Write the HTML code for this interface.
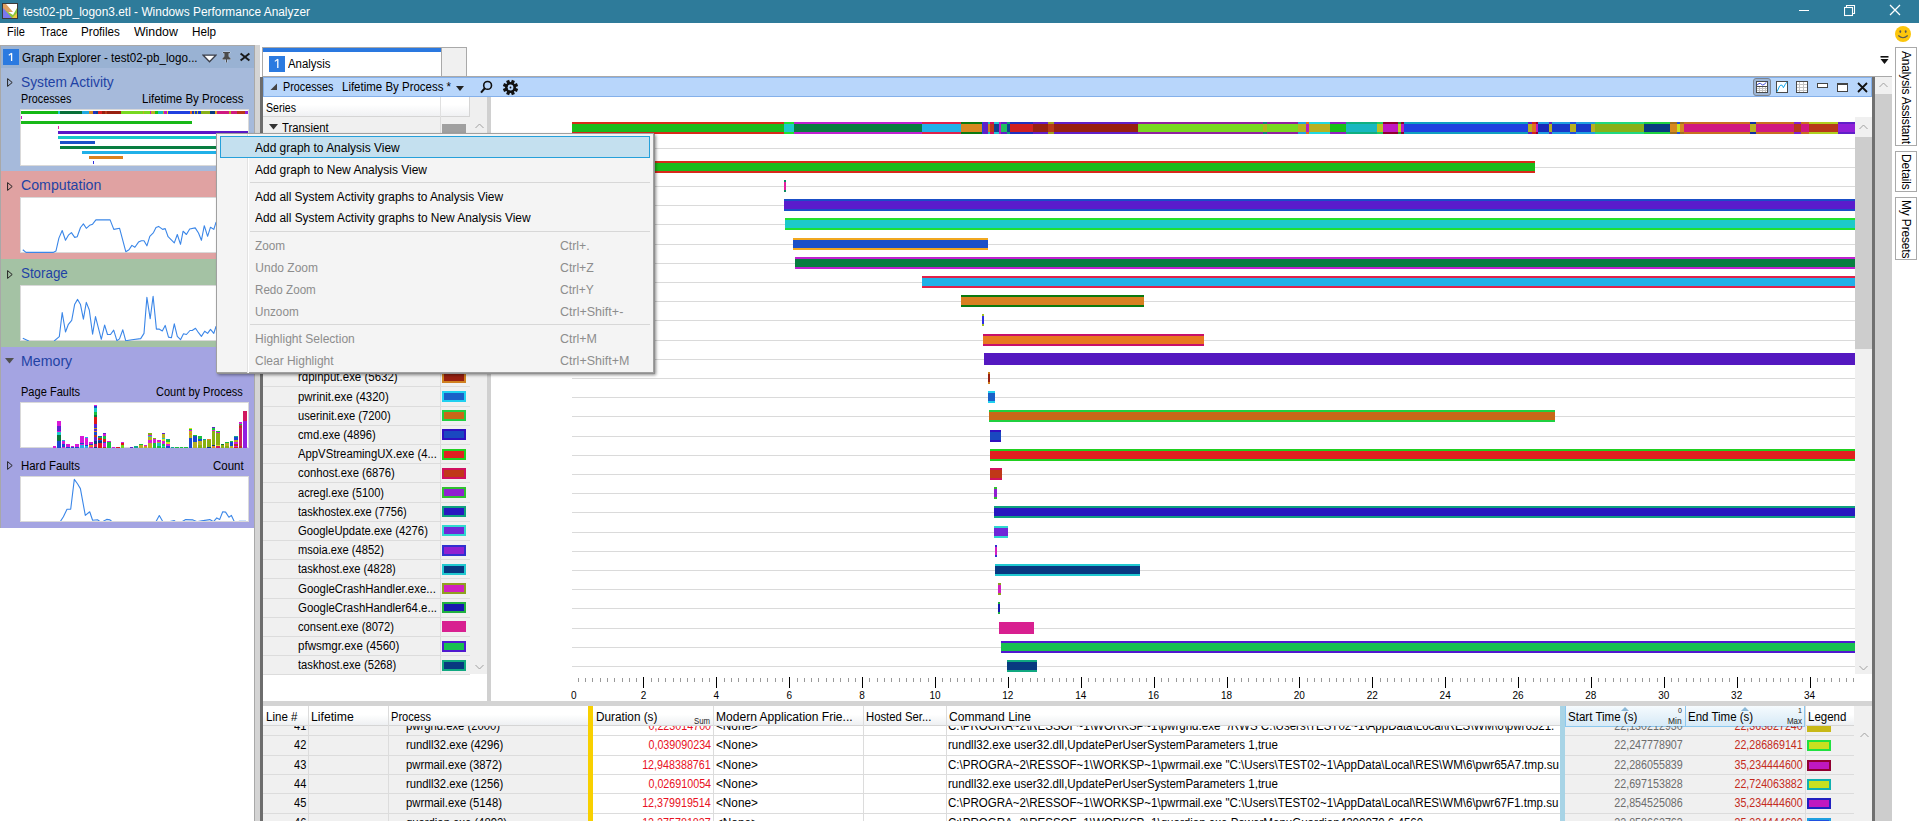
<!DOCTYPE html><html><head><meta charset="utf-8"><style>
html,body{margin:0;padding:0;width:1919px;height:821px;overflow:hidden;background:#fff;font-family:"Liberation Sans", sans-serif;font-size:12px;}
body>div,#root div{box-sizing:border-box;}
#root{position:relative;width:1919px;height:821px;overflow:hidden;}
</style></head><body><div id="root">
<div style="position:absolute;left:0px;top:0px;width:1919px;height:23px;background:#2e7b9a;"></div>
<svg style="position:absolute;left:2px;top:3px" width="16" height="16" viewBox="0 0 16 16"><rect x="0.5" y="0.5" width="15" height="15" fill="#fff" stroke="#3a3a3a" stroke-width="1"/><polygon points="1,1 4,1 11,9 1,9" fill="#e0a060"/><polygon points="1,5 11,15 1,15" fill="#7a78ee"/><polygon points="3,7 11,12 15,5 15,12 12,15 10,15" fill="#8cc43c"/><polygon points="15,10 15,15 10,15" fill="#f0c840"/></svg>
<div style="position:absolute;left:23.3px;top:2.00px;font-size:12px;line-height:20px;color:#fff;white-space:nowrap;transform-origin:left center;transform:scaleX(0.9914);">test02-pb_logon3.etl - Windows Performance Analyzer</div>
<div style="position:absolute;left:1799px;top:10px;width:10px;height:1px;background:#fff;"></div>
<svg style="position:absolute;left:1844px;top:5px" width="12" height="12" viewBox="0 0 12 12"><rect x="0.5" y="2.5" width="8" height="8" fill="none" stroke="#fff" stroke-width="1.1"/><path d="M2.5 2.5 V0.5 H10.5 V8.5 H8.5" fill="none" stroke="#fff" stroke-width="1.1"/></svg>
<svg style="position:absolute;left:1889px;top:4px" width="12" height="12" viewBox="0 0 12 12"><path d="M1 1 L11 11 M11 1 L1 11" stroke="#fff" stroke-width="1.3"/></svg>
<div style="position:absolute;left:7.3px;top:22.00px;font-size:12px;line-height:20px;color:#000;white-space:nowrap;transform-origin:left center;transform:scaleX(0.9202);">File</div>
<div style="position:absolute;left:39.5px;top:22.00px;font-size:12px;line-height:20px;color:#000;white-space:nowrap;transform-origin:left center;transform:scaleX(0.9096);">Trace</div>
<div style="position:absolute;left:81.1px;top:22.00px;font-size:12px;line-height:20px;color:#000;white-space:nowrap;transform-origin:left center;transform:scaleX(0.9696);">Profiles</div>
<div style="position:absolute;left:134.2px;top:22.00px;font-size:12px;line-height:20px;color:#000;white-space:nowrap;transform-origin:left center;transform:scaleX(1.0261);">Window</div>
<div style="position:absolute;left:192.3px;top:22.00px;font-size:12px;line-height:20px;color:#000;white-space:nowrap;transform-origin:left center;transform:scaleX(0.9762);">Help</div>
<svg style="position:absolute;left:1895px;top:26px" width="16" height="16" viewBox="0 0 16 16"><circle cx="8" cy="8" r="8" fill="#fcc60c"/><ellipse cx="5.3" cy="5.6" rx="0.9" ry="1.3" fill="#555"/><ellipse cx="10.7" cy="5.6" rx="0.9" ry="1.3" fill="#555"/><path d="M3.3 9.5 Q8 14 12.7 9.5" fill="none" stroke="#555" stroke-width="1.1"/></svg>
<div style="position:absolute;left:0px;top:45px;width:259px;height:776px;background:#fff;"></div>
<div style="position:absolute;left:0px;top:45px;width:254px;height:1px;background:#a9a9a9;"></div>
<div style="position:absolute;left:0px;top:45px;width:1px;height:483px;background:#a8a8a8;"></div>
<div style="position:absolute;left:254px;top:45px;width:1px;height:776px;background:#a9a9a9;"></div>
<div style="position:absolute;left:255px;top:45px;width:5px;height:776px;background:#d4d4d4;"></div>
<div style="position:absolute;left:1px;top:46px;width:253px;height:22px;background:#99b2d3;"></div>
<div style="position:absolute;left:1px;top:68px;width:253px;height:103px;background:#a6badb;"></div>
<div style="position:absolute;left:1px;top:171px;width:253px;height:88px;background:#e0a2a2;"></div>
<div style="position:absolute;left:1px;top:259px;width:253px;height:88px;background:#a4c2a4;"></div>
<div style="position:absolute;left:1px;top:347px;width:253px;height:181px;background:#a4a4e2;"></div>
<div style="position:absolute;left:3px;top:49px;width:16px;height:16px;background:#2b7ae0;"></div>
<svg style="position:absolute;left:7px;top:52px" width="8" height="10" viewBox="0 0 8 10"><path d="M4.6 1.2 V9" stroke="#fff" stroke-width="1.3"/><path d="M4.6 1.2 L1.8 3.2" stroke="#fff" stroke-width="1.1"/></svg>
<div style="position:absolute;left:22.2px;top:48.00px;font-size:12px;line-height:20px;color:#000;white-space:nowrap;transform-origin:left center;transform:scaleX(0.9678);">Graph Explorer - test02-pb_logo...</div>
<svg style="position:absolute;left:202px;top:54px" width="15" height="9" viewBox="0 0 15 9"><path d="M1.2 1.2 H13.8 L7.5 7.8 Z" fill="#fff" stroke="#3c3f4a" stroke-width="1.3" stroke-linejoin="miter"/></svg>
<svg style="position:absolute;left:221px;top:51px" width="11" height="12" viewBox="0 0 11 12"><path d="M2 1 H9 V2.2 H7.6 V5.6 L9.6 7.6 V8.4 H6 V11.4 H5 V8.4 H1.4 V7.6 L3.4 5.6 V2.2 H2 Z" fill="#4b4b4b" stroke="#eef4fb" stroke-width="0.6" paint-order="stroke"/></svg>
<svg style="position:absolute;left:239px;top:52px" width="12" height="10" viewBox="0 0 12 10"><path d="M1.6 1.4 L10.4 8.6 M10.4 1.4 L1.6 8.6" stroke="#1a1a1a" stroke-width="1.9"/></svg>
<svg style="position:absolute;left:7px;top:78px" width="6" height="9" viewBox="0 0 6 9"><path d="M0.6 0.6 L5.2 4.5 L0.6 8.4 Z" fill="none" stroke="#222" stroke-width="1"/></svg>
<div style="position:absolute;left:21.4px;top:72.00px;font-size:14px;line-height:20px;color:#1f42a4;white-space:nowrap;transform-origin:left center;transform:scaleX(0.9847);">System Activity</div>
<div style="position:absolute;left:21.4px;top:89.00px;font-size:12px;line-height:20px;color:#000;white-space:nowrap;transform-origin:left center;transform:scaleX(0.8977);">Processes</div>
<div style="position:absolute;left:142.4px;top:89.00px;font-size:12px;line-height:20px;color:#000;white-space:nowrap;transform-origin:left center;transform:scaleX(0.9581);">Lifetime By Process</div>
<div style="position:absolute;left:20px;top:109px;width:229px;height:57px;background:#fff;border:1px solid #d9d9d9;"></div>
<div style="position:absolute;left:21px;top:111px;width:37px;height:3px;background:#14b814;"></div>
<div style="position:absolute;left:58px;top:111px;width:2px;height:3px;background:#20c8c8;"></div>
<div style="position:absolute;left:60px;top:111px;width:22px;height:3px;background:#087038;"></div>
<div style="position:absolute;left:82px;top:111px;width:7px;height:3px;background:#20a8e0;"></div>
<div style="position:absolute;left:89px;top:111px;width:4px;height:3px;background:#d88820;"></div>
<div style="position:absolute;left:93px;top:111px;width:3px;height:3px;background:#2030c0;"></div>
<div style="position:absolute;left:96px;top:111px;width:2px;height:3px;background:#104090;"></div>
<div style="position:absolute;left:98px;top:111px;width:4px;height:3px;background:#e02020;"></div>
<div style="position:absolute;left:102px;top:111px;width:3px;height:3px;background:#982010;"></div>
<div style="position:absolute;left:105px;top:111px;width:2px;height:3px;background:#b83818;"></div>
<div style="position:absolute;left:107px;top:111px;width:14px;height:3px;background:#982010;"></div>
<div style="position:absolute;left:121px;top:111px;width:22px;height:3px;background:#78d820;"></div>
<div style="position:absolute;left:143px;top:111px;width:1px;height:3px;background:#b8b020;"></div>
<div style="position:absolute;left:144px;top:111px;width:5.599999999999994px;height:3px;background:#78d820;"></div>
<div style="position:absolute;left:149.6px;top:111px;width:1.0999999999999943px;height:3px;background:#c018c0;"></div>
<div style="position:absolute;left:150.7px;top:111px;width:4.300000000000011px;height:3px;background:#b8b020;"></div>
<div style="position:absolute;left:155px;top:111px;width:3px;height:3px;background:#18c018;"></div>
<div style="position:absolute;left:158px;top:111px;width:5px;height:3px;background:#18b8c0;"></div>
<div style="position:absolute;left:163px;top:111px;width:1px;height:3px;background:#b8b020;"></div>
<div style="position:absolute;left:164px;top:111px;width:3px;height:3px;background:#c018c0;"></div>
<div style="position:absolute;left:167px;top:111px;width:1px;height:3px;background:#e0e020;"></div>
<div style="position:absolute;left:168px;top:111px;width:22px;height:3px;background:#2040e0;"></div>
<div style="position:absolute;left:190px;top:111px;width:2px;height:3px;background:#e07020;"></div>
<div style="position:absolute;left:192px;top:111px;width:2px;height:3px;background:#1838c8;"></div>
<div style="position:absolute;left:194px;top:111px;width:1px;height:3px;background:#b8b020;"></div>
<div style="position:absolute;left:195px;top:111px;width:2px;height:3px;background:#1838c8;"></div>
<div style="position:absolute;left:197px;top:111px;width:1px;height:3px;background:#b8b020;"></div>
<div style="position:absolute;left:198px;top:111px;width:3px;height:3px;background:#1838c8;"></div>
<div style="position:absolute;left:201px;top:111px;width:8.800000000000011px;height:3px;background:#88b018;"></div>
<div style="position:absolute;left:209.8px;top:111px;width:5.5px;height:3px;background:#083a80;"></div>
<div style="position:absolute;left:215.3px;top:111px;width:1.6999999999999886px;height:3px;background:#e0a020;"></div>
<div style="position:absolute;left:217px;top:111px;width:12px;height:3px;background:#d01880;"></div>
<div style="position:absolute;left:229px;top:111px;width:2px;height:3px;background:#b8b020;"></div>
<div style="position:absolute;left:231px;top:111px;width:6.199999999999989px;height:3px;background:#d01880;"></div>
<div style="position:absolute;left:237.2px;top:111px;width:8.0px;height:3px;background:#b83818;"></div>
<div style="position:absolute;left:245.2px;top:111px;width:2.8000000000000114px;height:3px;background:#9020d8;"></div>
<div style="position:absolute;left:21px;top:116px;width:1px;height:3px;background:#c018c0;"></div>
<div style="position:absolute;left:21px;top:121px;width:171px;height:3px;background:#18b818;"></div>
<div style="position:absolute;left:58px;top:126px;width:1px;height:3px;background:#e020a0;"></div>
<div style="position:absolute;left:58px;top:131px;width:190px;height:3px;background:#5a18c8;"></div>
<div style="position:absolute;left:58px;top:136px;width:158px;height:3px;background:#18c8c8;"></div>
<div style="position:absolute;left:60px;top:141px;width:35px;height:3px;background:#1a50c8;"></div>
<div style="position:absolute;left:60px;top:146px;width:156px;height:3px;background:#087d40;"></div>
<div style="position:absolute;left:82px;top:151px;width:134px;height:3px;background:#20b0e8;"></div>
<div style="position:absolute;left:89px;top:156px;width:34px;height:3px;background:#d88020;"></div>
<div style="position:absolute;left:93px;top:161px;width:1px;height:3px;background:#3030e0;"></div>
<svg style="position:absolute;left:7px;top:182px" width="6" height="9" viewBox="0 0 6 9"><path d="M0.6 0.6 L5.2 4.5 L0.6 8.4 Z" fill="none" stroke="#222" stroke-width="1"/></svg>
<div style="position:absolute;left:21.4px;top:175.00px;font-size:14px;line-height:20px;color:#1f42a4;white-space:nowrap;transform-origin:left center;transform:scaleX(1.0115);">Computation</div>
<div style="position:absolute;left:20px;top:197px;width:229px;height:56px;background:#fff;border:1px solid #d9d9d9;"></div>
<div style="position:absolute;left:0;top:0;width:259px;height:252.5px;overflow:hidden"><svg style="position:absolute;left:0;top:0" width="259" height="540" viewBox="0 0 259 540"><polyline points="22.8,249.8 26.0,252.4 53.1,252.4 56.0,250.9 58.9,238.1 62.2,230.5 65.5,240.3 68.4,235.2 71.4,232.6 74.7,237.4 77.2,236.7 80.5,227.5 83.4,223.9 86.3,228.3 89.6,225.3 92.6,224.2 95.9,219.9 110.1,219.9 113.8,229.4 119.6,228.3 125.8,251.7 129.0,249.8 131.9,245.4 134.9,247.3 138.5,242.1 141.4,240.7 144.0,240.7 146.9,245.8 149.8,236.3 153.5,232.6 156.0,227.5 158.6,226.4 162.6,229.4 165.2,228.6 168.1,236.7 174.3,242.9 177.3,234.5 180.5,244.3 183.1,231.2 186.4,234.5 189.7,229.0 195.2,227.9 198.5,233.0 201.4,240.3 204.3,225.7 207.6,236.3 210.5,227.2 213.8,229.4 216.0,222.4 222.0,230.0 230.0,226.0 238.0,234.0 246.0,224.0" fill="none" stroke="#3a86e8" stroke-width="1.1" stroke-linejoin="round"/></svg></div>
<svg style="position:absolute;left:7px;top:270px" width="6" height="9" viewBox="0 0 6 9"><path d="M0.6 0.6 L5.2 4.5 L0.6 8.4 Z" fill="none" stroke="#222" stroke-width="1"/></svg>
<div style="position:absolute;left:21.4px;top:263.00px;font-size:14px;line-height:20px;color:#1f42a4;white-space:nowrap;transform-origin:left center;transform:scaleX(0.9542);">Storage</div>
<div style="position:absolute;left:20px;top:285px;width:229px;height:56px;background:#fff;border:1px solid #d9d9d9;"></div>
<div style="position:absolute;left:0;top:0;width:259px;height:340.5px;overflow:hidden"><svg style="position:absolute;left:0;top:0" width="259" height="540" viewBox="0 0 259 540"><polyline points="22.8,338.2 28.2,340.7 29.0,341.5 54.0,341.5 54.5,340.7 59.3,336.7 62.2,312.6 65.5,332.0 68.4,324.3 71.7,320.3 74.7,304.2 77.6,299.4 80.5,304.6 83.4,319.2 86.3,302.4 89.3,310.0 92.6,334.2 95.5,316.6 101.3,339.3 104.6,325.0 107.5,334.5 110.5,334.5 113.7,330.1 116.9,340.7 119.5,338.9 122.8,329.8 125.7,340.7 131.9,339.7 140.7,338.6 144.0,333.4 146.9,297.3 150.2,318.8 153.1,296.2 156.4,329.1 159.0,329.1 162.3,330.9 165.2,325.4 168.5,337.1 171.4,337.8 174.3,323.9 177.3,336.4 180.5,339.7 183.5,333.8 186.4,334.5 190.0,330.5 192.2,330.5 195.5,328.3 198.5,332.7 201.4,336.4 204.7,331.2 207.6,333.4 210.5,329.4 213.8,333.4 216.0,326.5 224.0,334.0 232.0,328.0 240.0,336.0 247.0,330.0" fill="none" stroke="#3a86e8" stroke-width="1.1" stroke-linejoin="round"/></svg></div>
<svg style="position:absolute;left:5px;top:358px" width="9" height="6" viewBox="0 0 9 6"><path d="M0 0 H9 L4.5 5.5 Z" fill="#505050"/></svg>
<div style="position:absolute;left:21.4px;top:351.00px;font-size:14px;line-height:20px;color:#1f42a4;white-space:nowrap;transform-origin:left center;transform:scaleX(1.0126);">Memory</div>
<div style="position:absolute;left:21.4px;top:382.00px;font-size:12px;line-height:20px;color:#000;white-space:nowrap;transform-origin:left center;transform:scaleX(0.9212);">Page Faults</div>
<div style="position:absolute;left:156.4px;top:382.00px;font-size:12px;line-height:20px;color:#000;white-space:nowrap;transform-origin:left center;transform:scaleX(0.9164);">Count by Process</div>
<div style="position:absolute;left:20px;top:402px;width:229px;height:46px;background:#fff;border:1px solid #d9d9d9;"></div>
<svg style="position:absolute;left:0;top:0" width="259" height="540" shape-rendering="crispEdges"><rect x="53" y="446" width="3" height="2" fill="#d818d8"/><rect x="57" y="421" width="4" height="5" fill="#d818d8"/><rect x="57" y="426" width="4" height="5" fill="#6020d0"/><rect x="57" y="431" width="4" height="1" fill="#d818d8"/><rect x="57" y="432" width="4" height="3" fill="#18c8c8"/><rect x="57" y="435" width="4" height="6" fill="#087838"/><rect x="57" y="441" width="4" height="7" fill="#1848d0"/><rect x="62" y="439.5" width="3" height="1.5" fill="#20b0e8"/><rect x="62" y="441" width="3" height="3" fill="#d818d8"/><rect x="62" y="444" width="3" height="3" fill="#1848d0"/><rect x="62" y="447" width="3" height="1" fill="#d818d8"/><rect x="66" y="444" width="4" height="3" fill="#d818d8"/><rect x="66" y="447" width="4" height="1" fill="#1848d0"/><rect x="71" y="446" width="3" height="1" fill="#d818d8"/><rect x="71" y="447" width="3" height="1" fill="#1848d0"/><rect x="75" y="444" width="4" height="3" fill="#d818d8"/><rect x="75" y="447" width="4" height="1" fill="#1848d0"/><rect x="80" y="436" width="4" height="7" fill="#d818d8"/><rect x="80" y="443" width="4" height="1" fill="#1848d0"/><rect x="80" y="444" width="4" height="1" fill="#d818d8"/><rect x="80" y="445" width="4" height="3" fill="#20b0e8"/><rect x="85" y="437" width="3" height="1" fill="#20b0e8"/><rect x="85" y="438" width="3" height="6.5" fill="#d818d8"/><rect x="85" y="444.5" width="3" height="1.0" fill="#1848d0"/><rect x="85" y="445.5" width="3" height="2.5" fill="#20b0e8"/><rect x="89" y="442" width="4" height="2" fill="#d818d8"/><rect x="89" y="444" width="4" height="1" fill="#1848d0"/><rect x="89" y="445" width="4" height="2" fill="#e08818"/><rect x="89" y="447" width="4" height="1" fill="#d818d8"/><rect x="94" y="405" width="3" height="1" fill="#d818d8"/><rect x="94" y="406" width="3" height="2" fill="#1848d0"/><rect x="94" y="408" width="3" height="4" fill="#18c8c8"/><rect x="94" y="412" width="3" height="3" fill="#18c040"/><rect x="94" y="415" width="3" height="2" fill="#087838"/><rect x="94" y="417" width="3" height="7" fill="#e01818"/><rect x="94" y="424" width="3" height="3" fill="#6020d0"/><rect x="94" y="427" width="3" height="1" fill="#1848d0"/><rect x="94" y="428" width="3" height="1" fill="#e08818"/><rect x="94" y="429" width="3" height="2" fill="#6020d0"/><rect x="94" y="431" width="3" height="1" fill="#e08818"/><rect x="94" y="432" width="3" height="3" fill="#1848d0"/><rect x="94" y="435" width="3" height="2" fill="#b83818"/><rect x="94" y="437" width="3" height="4" fill="#6020d0"/><rect x="94" y="441" width="3" height="3" fill="#083a80"/><rect x="94" y="444" width="3" height="3" fill="#d01860"/><rect x="94" y="447" width="3" height="1" fill="#083a80"/><rect x="98" y="436" width="4" height="1" fill="#1848d0"/><rect x="98" y="437" width="4" height="1" fill="#18c040"/><rect x="98" y="438" width="4" height="2" fill="#e01818"/><rect x="98" y="440" width="4" height="1" fill="#1848d0"/><rect x="98" y="441" width="4" height="2" fill="#083a80"/><rect x="98" y="443" width="4" height="5" fill="#e01818"/><rect x="103" y="433" width="3" height="1" fill="#6020d0"/><rect x="103" y="434" width="3" height="2" fill="#d818d8"/><rect x="103" y="436" width="3" height="3" fill="#18c040"/><rect x="103" y="439" width="3" height="3" fill="#e01818"/><rect x="103" y="442" width="3" height="1" fill="#1848d0"/><rect x="103" y="443" width="3" height="4" fill="#d818d8"/><rect x="103" y="447" width="3" height="1" fill="#b83818"/><rect x="107" y="441" width="4" height="1" fill="#d818d8"/><rect x="107" y="442" width="4" height="6" fill="#18c040"/><rect x="112" y="447" width="3" height="1" fill="#d818d8"/><rect x="116" y="447" width="4" height="1" fill="#e01818"/><rect x="121" y="442" width="3" height="1" fill="#d818d8"/><rect x="121" y="443" width="3" height="2" fill="#e01818"/><rect x="121" y="445" width="3" height="3" fill="#70d818"/><rect x="130" y="447" width="3" height="1" fill="#6020d0"/><rect x="134" y="446" width="4" height="2" fill="#10a890"/><rect x="139" y="444" width="4" height="1" fill="#18c040"/><rect x="139" y="445" width="4" height="3" fill="#b8b020"/><rect x="144" y="445" width="3" height="1" fill="#d818d8"/><rect x="144" y="446" width="3" height="1" fill="#e08818"/><rect x="144" y="447" width="3" height="1" fill="#b8b020"/><rect x="148" y="433" width="4" height="2" fill="#88b010"/><rect x="148" y="435" width="4" height="1" fill="#d818d8"/><rect x="148" y="436" width="4" height="1" fill="#18c8c8"/><rect x="148" y="437" width="4" height="3" fill="#b8b020"/><rect x="148" y="440" width="4" height="3" fill="#d818d8"/><rect x="148" y="443" width="4" height="5" fill="#b8b020"/><rect x="153" y="438" width="3" height="1" fill="#88b010"/><rect x="153" y="439" width="3" height="4" fill="#d818d8"/><rect x="153" y="443" width="3" height="5" fill="#18c040"/><rect x="157" y="440" width="4" height="2" fill="#d818d8"/><rect x="157" y="442" width="4" height="1" fill="#b8b020"/><rect x="157" y="443" width="4" height="3" fill="#18c8c8"/><rect x="157" y="446" width="4" height="2" fill="#18c040"/><rect x="162" y="433" width="3" height="1" fill="#6020d0"/><rect x="162" y="434" width="3" height="4" fill="#b8b020"/><rect x="162" y="438" width="3" height="1" fill="#18c8c8"/><rect x="162" y="439" width="3" height="2" fill="#d8e020"/><rect x="162" y="441" width="3" height="3" fill="#d818d8"/><rect x="162" y="444" width="3" height="2" fill="#18c040"/><rect x="162" y="446" width="3" height="1" fill="#18c8c8"/><rect x="162" y="447" width="3" height="1" fill="#18c040"/><rect x="166" y="439" width="4" height="1" fill="#10a890"/><rect x="166" y="440" width="4" height="2" fill="#18c040"/><rect x="166" y="442" width="4" height="2" fill="#d8e020"/><rect x="166" y="444" width="4" height="2" fill="#d818d8"/><rect x="166" y="446" width="4" height="2" fill="#1848d0"/><rect x="171" y="447" width="3" height="1" fill="#10a890"/><rect x="175" y="447" width="4" height="1" fill="#18c040"/><rect x="180" y="447" width="3" height="1" fill="#18c040"/><rect x="184" y="447" width="4" height="1" fill="#18c040"/><rect x="189" y="428" width="3" height="1" fill="#d8e020"/><rect x="189" y="429" width="3" height="1" fill="#18c040"/><rect x="189" y="430" width="3" height="1" fill="#d818d8"/><rect x="189" y="431" width="3" height="2" fill="#b8b020"/><rect x="189" y="433" width="3" height="2" fill="#e08818"/><rect x="189" y="435" width="3" height="3" fill="#b8b020"/><rect x="189" y="438" width="3" height="10" fill="#1848d0"/><rect x="193" y="435" width="4" height="1" fill="#18c040"/><rect x="193" y="436" width="4" height="6" fill="#1848d0"/><rect x="193" y="442" width="4" height="6" fill="#b8b020"/><rect x="198" y="436" width="4" height="3" fill="#18c040"/><rect x="198" y="439" width="4" height="2" fill="#1848d0"/><rect x="198" y="441" width="4" height="4" fill="#b8b020"/><rect x="198" y="445" width="4" height="3" fill="#88b010"/><rect x="203" y="439" width="3" height="1" fill="#10a890"/><rect x="203" y="440" width="3" height="8" fill="#88b010"/><rect x="207" y="439" width="4" height="1" fill="#e08818"/><rect x="207" y="440" width="4" height="7" fill="#88b010"/><rect x="207" y="447" width="4" height="1" fill="#083a80"/><rect x="212" y="427" width="3" height="1" fill="#6020d0"/><rect x="212" y="428" width="3" height="2" fill="#18c040"/><rect x="212" y="430" width="3" height="1" fill="#d818d8"/><rect x="212" y="431" width="3" height="14" fill="#88b010"/><rect x="212" y="445" width="3" height="1" fill="#083a80"/><rect x="212" y="446" width="3" height="2" fill="#e08818"/><rect x="216" y="431" width="4" height="1" fill="#18c040"/><rect x="216" y="432" width="4" height="1" fill="#d818d8"/><rect x="216" y="433" width="4" height="12" fill="#88b010"/><rect x="216" y="445" width="4" height="1" fill="#d8e020"/><rect x="216" y="446" width="4" height="2" fill="#d01860"/><rect x="221" y="444" width="3" height="1" fill="#087838"/><rect x="221" y="445" width="3" height="3" fill="#88b010"/><rect x="225" y="442" width="4" height="1" fill="#18c040"/><rect x="225" y="443" width="4" height="3" fill="#b8b020"/><rect x="225" y="446" width="4" height="2" fill="#88b010"/><rect x="230" y="441" width="3" height="1" fill="#18c040"/><rect x="230" y="442" width="3" height="4" fill="#1848d0"/><rect x="230" y="446" width="3" height="2" fill="#b8b020"/><rect x="234" y="436" width="4" height="1" fill="#10a890"/><rect x="234" y="437" width="4" height="3" fill="#1848d0"/><rect x="234" y="440" width="4" height="2" fill="#b8b020"/><rect x="234" y="442" width="4" height="2" fill="#d818d8"/><rect x="234" y="444" width="4" height="2" fill="#b83818"/><rect x="234" y="446" width="4" height="1" fill="#d818d8"/><rect x="234" y="447" width="4" height="1" fill="#e01818"/><rect x="239" y="422" width="3" height="2" fill="#d818d8"/><rect x="239" y="424" width="3" height="1" fill="#18c040"/><rect x="239" y="425" width="3" height="1" fill="#d01860"/><rect x="239" y="426" width="3" height="2" fill="#b83818"/><rect x="239" y="428" width="3" height="18" fill="#d01860"/><rect x="239" y="446" width="3" height="2" fill="#b83818"/><rect x="243" y="411" width="4" height="10" fill="#d01860"/><rect x="243" y="421" width="4" height="27" fill="#9020e0"/></svg>
<svg style="position:absolute;left:7px;top:461px" width="6" height="9" viewBox="0 0 6 9"><path d="M0.6 0.6 L5.2 4.5 L0.6 8.4 Z" fill="none" stroke="#222" stroke-width="1"/></svg>
<div style="position:absolute;left:21.4px;top:456.00px;font-size:12px;line-height:20px;color:#000;white-space:nowrap;transform-origin:left center;transform:scaleX(0.9511);">Hard Faults</div>
<div style="position:absolute;left:212.5px;top:456.00px;font-size:12px;line-height:20px;color:#000;white-space:nowrap;transform-origin:left center;transform:scaleX(0.9584);">Count</div>
<div style="position:absolute;left:20px;top:476px;width:229px;height:46px;background:#fff;border:1px solid #d9d9d9;"></div>
<div style="position:absolute;left:0;top:0;width:259px;height:521px;overflow:hidden"><svg style="position:absolute;left:0;top:0" width="259" height="540" viewBox="0 0 259 540"><polyline points="21.0,522.5 59.7,522.5 63.4,516.7 67.0,509.3 70.7,509.3 74.3,479.4 77.5,483.8 80.4,488.6 85.3,515.4 89.7,511.8 92.6,520.3 97.5,519.8 100.0,521.6 102.7,521.6 106.7,519.4 110.0,519.9 113.0,522.5 151.6,522.5 156.0,521.6 159.3,515.5 162.6,521.2 169.7,521.6 174.3,520.6 176.7,522.5 181.4,522.0 185.7,519.6 193.0,519.9 197.0,521.7 201.8,520.9 209.8,519.6 213.5,521.7 216.8,517.9 219.7,519.4 222.7,511.7 225.6,512.1 228.9,517.2 231.4,515.4 234.7,522.5 239.5,521.3 246.0,521.3" fill="none" stroke="#3a86e8" stroke-width="1.1" stroke-linejoin="round"/></svg></div>
<div style="position:absolute;left:262px;top:47px;width:180px;height:30px;background:#fff;border:1px solid #a9a9a9;border-bottom:none;"></div>
<div style="position:absolute;left:263px;top:48px;width:178px;height:4px;background:#2a78e0;"></div>
<div style="position:absolute;left:441px;top:47px;width:26px;height:30px;background:#f0f0f0;border:1px solid #a9a9a9;border-bottom:none;"></div>
<div style="position:absolute;left:269px;top:56px;width:16px;height:16px;background:#2b7ae0;"></div>
<svg style="position:absolute;left:273px;top:58px" width="8" height="11" viewBox="0 0 8 11"><path d="M4.8 1.3 V10" stroke="#fff" stroke-width="1.3"/><path d="M4.8 1.3 L1.8 3.4" stroke="#fff" stroke-width="1.1"/></svg>
<div style="position:absolute;left:288.2px;top:54.00px;font-size:12px;line-height:20px;color:#000;white-space:nowrap;transform-origin:left center;transform:scaleX(0.9510);">Analysis</div>
<svg style="position:absolute;left:1880px;top:56px" width="10" height="10" viewBox="0 0 10 10"><rect x="0.5" y="0" width="8" height="1.6" fill="#111"/><path d="M0.5 3 H8.5 L4.5 8 Z" fill="#111"/></svg>
<div style="position:absolute;left:263px;top:76px;width:1629px;height:1px;background:#a9a9a9;"></div>
<div style="position:absolute;left:260px;top:77px;width:3px;height:744px;background:#6d6d6d;"></div>
<div style="position:absolute;left:263px;top:77px;width:1609px;height:20px;background:#b8d6fb;border:1px solid #84b0ea;"></div>
<svg style="position:absolute;left:270px;top:83px" width="8" height="8" viewBox="0 0 8 8"><path d="M7 0.5 V7 H0.5 Z" fill="#444"/></svg>
<div style="position:absolute;left:283.3px;top:77.00px;font-size:12px;line-height:20px;color:#000;white-space:nowrap;transform-origin:left center;transform:scaleX(0.8977);">Processes</div>
<div style="position:absolute;left:342.2px;top:77.00px;font-size:12px;line-height:20px;color:#000;white-space:nowrap;transform-origin:left center;transform:scaleX(0.9566);">Lifetime By Process *</div>
<svg style="position:absolute;left:455.5px;top:86px" width="8" height="5" viewBox="0 0 8 5"><path d="M0 0 H8 L4 5 Z" fill="#222"/></svg>
<svg style="position:absolute;left:480px;top:80px" width="13" height="14" viewBox="0 0 13 14"><circle cx="7.6" cy="5.4" r="3.9" fill="none" stroke="#111" stroke-width="1.6"/><path d="M5 8 L1 12.6" stroke="#111" stroke-width="2"/></svg>
<svg style="position:absolute;left:502px;top:79px" width="17" height="17" viewBox="0 0 17 17"><g fill="#111"><circle cx="8.5" cy="8.5" r="5.4"/><rect x="6.9" y="0.9" width="3.2" height="3.6" transform="rotate(22.5 8.5 8.5)"/><rect x="6.9" y="0.9" width="3.2" height="3.6" transform="rotate(67.5 8.5 8.5)"/><rect x="6.9" y="0.9" width="3.2" height="3.6" transform="rotate(112.5 8.5 8.5)"/><rect x="6.9" y="0.9" width="3.2" height="3.6" transform="rotate(157.5 8.5 8.5)"/><rect x="6.9" y="0.9" width="3.2" height="3.6" transform="rotate(202.5 8.5 8.5)"/><rect x="6.9" y="0.9" width="3.2" height="3.6" transform="rotate(247.5 8.5 8.5)"/><rect x="6.9" y="0.9" width="3.2" height="3.6" transform="rotate(292.5 8.5 8.5)"/><rect x="6.9" y="0.9" width="3.2" height="3.6" transform="rotate(337.5 8.5 8.5)"/></g><circle cx="8.5" cy="8.5" r="2.9" fill="#b8d6fb"/><circle cx="8.5" cy="8.5" r="0.9" fill="#111"/></svg>
<div style="position:absolute;left:1753px;top:78px;width:18px;height:18px;background:#9db6d6;border:1.5px solid #7d8592;border-radius:3px;"></div>
<svg style="position:absolute;left:1756px;top:81px" width="12" height="12" viewBox="0 0 12 12" shape-rendering="crispEdges"><rect x="0" y="0" width="12" height="12" fill="#4a4a4a"/><rect x="1" y="1" width="10" height="4" fill="#fff"/><rect x="1" y="6" width="10" height="5" fill="#c4c4c4"/><rect x="1" y="6" width="2" height="1" fill="#fff"/><rect x="1" y="8" width="2" height="1" fill="#fff"/><rect x="1" y="10" width="2" height="1" fill="#fff"/><rect x="4" y="6" width="2" height="1" fill="#fff"/><rect x="4" y="8" width="2" height="1" fill="#fff"/><rect x="4" y="10" width="2" height="1" fill="#fff"/><rect x="7" y="6" width="2" height="1" fill="#fff"/><rect x="7" y="8" width="2" height="1" fill="#fff"/><rect x="7" y="10" width="2" height="1" fill="#fff"/><rect x="10" y="6" width="1" height="1" fill="#fff"/><rect x="10" y="8" width="1" height="1" fill="#fff"/><rect x="10" y="10" width="1" height="1" fill="#fff"/><path d="M1 4 L3 2.5 L4.5 2.5 L6.5 4 L8 3.5 L10.5 1.2" fill="none" stroke="#2a3ad8" stroke-width="0.9" shape-rendering="auto"/></svg>
<svg style="position:absolute;left:1776px;top:81px" width="12" height="12" viewBox="0 0 12 12"><rect x="0.5" y="0.5" width="11" height="11" fill="#fff" stroke="#4a4a4a"/><path d="M1 10.8 L3.6 5 L5 4 L6.4 4.5 L7.4 6.7 L9.2 3.5 L11 1" fill="none" stroke="#12a6ee" stroke-width="1"/></svg>
<svg style="position:absolute;left:1796px;top:81px" width="12" height="12" viewBox="0 0 12 12" shape-rendering="crispEdges"><rect x="0" y="0" width="12" height="12" fill="#4a4a4a"/><rect x="1" y="1" width="10" height="10" fill="#fff"/><rect x="3" y="1" width="1" height="10" fill="#c4c4c4"/><rect x="7" y="1" width="1" height="10" fill="#c4c4c4"/><rect x="1" y="3" width="10" height="1" fill="#c4c4c4"/><rect x="1" y="6" width="10" height="1" fill="#c4c4c4"/><rect x="1" y="9" width="10" height="1" fill="#c4c4c4"/></svg>
<div style="position:absolute;left:1817px;top:83px;width:11px;height:5px;border:1.5px solid #444;background:#fff;"></div>
<div style="position:absolute;left:1837px;top:83px;width:11px;height:9px;border:1.3px solid #444;border-top-width:2px;background:#fff;"></div>
<svg style="position:absolute;left:1857px;top:82px" width="11" height="11" viewBox="0 0 11 11"><path d="M1 1 L10 10 M10 1 L1 10" stroke="#111" stroke-width="1.8"/></svg>
<div style="position:absolute;left:1872px;top:77px;width:3px;height:744px;background:#707070;"></div>
<div style="position:absolute;left:1875px;top:77px;width:17px;height:744px;background:#cdcdcd;"></div>
<div style="position:absolute;left:1875px;top:77px;width:17px;height:17px;background:#f0f0f0;"></div>
<svg style="position:absolute;left:1879px;top:82px" width="9" height="6" viewBox="0 0 9 6"><path d="M0.5 5 L4.5 1 L8.5 5" fill="none" stroke="#a0a0a0" stroke-width="1"/></svg>
<div style="position:absolute;left:1895px;top:47px;width:22px;height:99px;background:#fff;border:1px solid #a9a9a9;"></div><div style="position:absolute;left:1895px;top:47px;width:22px;height:99px;writing-mode:vertical-rl;font-size:12px;line-height:22px;text-align:center;color:#000;white-space:nowrap;letter-spacing:-0.17px;padding-top:1px;">Analysis Assistant</div>
<div style="position:absolute;left:1895px;top:151px;width:22px;height:41px;background:#fff;border:1px solid #a9a9a9;"></div><div style="position:absolute;left:1895px;top:151px;width:22px;height:41px;writing-mode:vertical-rl;font-size:12px;line-height:22px;text-align:center;color:#000;white-space:nowrap;letter-spacing:-0.17px;padding-top:1px;">Details</div>
<div style="position:absolute;left:1895px;top:197px;width:22px;height:63px;background:#fff;border:1px solid #a9a9a9;"></div><div style="position:absolute;left:1895px;top:197px;width:22px;height:63px;writing-mode:vertical-rl;font-size:12px;line-height:22px;text-align:center;color:#000;white-space:nowrap;letter-spacing:-0.17px;padding-top:1px;">My Presets</div>
<div style="position:absolute;left:263px;top:97px;width:224px;height:604px;background:#fff;"></div>
<div style="position:absolute;left:263px;top:97px;width:207px;height:20px;background:linear-gradient(#ffffff 0%,#ffffff 40%,#f0f1f3 100%);border-bottom:1px solid #d5d5d5;"></div>
<div style="position:absolute;left:439.5px;top:97px;width:1px;height:20px;background:#e0e0e0;"></div>
<div style="position:absolute;left:469px;top:97px;width:1px;height:20px;background:#d5d5d5;"></div>
<div style="position:absolute;left:266px;top:97.50px;font-size:12px;line-height:20px;color:#000;white-space:nowrap;transform-origin:left center;transform:scaleX(0.8819);">Series</div>
<div style="position:absolute;left:470px;top:97px;width:17px;height:577px;background:#efefef;"></div>
<svg style="position:absolute;left:475px;top:123px" width="9" height="6" viewBox="0 0 9 6"><path d="M0.5 5 L4.5 1 L8.5 5" fill="none" stroke="#a0a0a0" stroke-width="1"/></svg>
<svg style="position:absolute;left:475px;top:664px" width="9" height="6" viewBox="0 0 9 6"><path d="M0.5 1 L4.5 5 L8.5 1" fill="none" stroke="#a0a0a0" stroke-width="1"/></svg>
<div style="position:absolute;left:487px;top:97px;width:4px;height:604px;background:#d0d0d0;"></div>
<div style="position:absolute;left:263px;top:117px;width:207px;height:557px;background:#f0f0f0;"></div>
<div style="position:absolute;left:440px;top:117px;width:1px;height:557px;background:#dcdcdc;"></div>
<div style="position:absolute;left:263px;top:137px;width:207px;height:1px;background:#dcdcdc;"></div>
<svg style="position:absolute;left:269px;top:124px" width="9" height="6" viewBox="0 0 9 6"><path d="M0 0 H9 L4.5 5.5 Z" fill="#333"/></svg>
<div style="position:absolute;left:282.1px;top:118.00px;font-size:12px;line-height:20px;color:#000;white-space:nowrap;transform-origin:left center;transform:scaleX(0.9419);">Transient</div>
<div style="position:absolute;left:442px;top:124px;width:24px;height:13px;background:#a0a0a0;"></div>
<div style="position:absolute;left:263px;top:156px;width:207px;height:1px;background:#dcdcdc;"></div>
<div style="position:absolute;left:297.6px;top:137.00px;font-size:12px;line-height:20px;color:#000;white-space:nowrap;"></div>
<div style="position:absolute;left:442px;top:141px;width:24px;height:11px;background:#20c018;border:2px solid #e02020;"></div>
<div style="position:absolute;left:263px;top:175px;width:207px;height:1px;background:#dcdcdc;"></div>
<div style="position:absolute;left:297.6px;top:156.00px;font-size:12px;line-height:20px;color:#000;white-space:nowrap;"></div>
<div style="position:absolute;left:442px;top:161px;width:24px;height:11px;background:#20c018;border:2px solid #e02020;"></div>
<div style="position:absolute;left:263px;top:194px;width:207px;height:1px;background:#dcdcdc;"></div>
<div style="position:absolute;left:297.6px;top:175.00px;font-size:12px;line-height:20px;color:#000;white-space:nowrap;"></div>
<div style="position:absolute;left:442px;top:180px;width:24px;height:11px;background:#e020a0;border:2px solid #0a8a60;"></div>
<div style="position:absolute;left:263px;top:214px;width:207px;height:1px;background:#dcdcdc;"></div>
<div style="position:absolute;left:297.6px;top:195.00px;font-size:12px;line-height:20px;color:#000;white-space:nowrap;"></div>
<div style="position:absolute;left:442px;top:199px;width:24px;height:11px;background:#5a18c8;border:2px solid #1a50c8;"></div>
<div style="position:absolute;left:263px;top:233px;width:207px;height:1px;background:#dcdcdc;"></div>
<div style="position:absolute;left:297.6px;top:214.00px;font-size:12px;line-height:20px;color:#000;white-space:nowrap;"></div>
<div style="position:absolute;left:442px;top:218px;width:24px;height:11px;background:#18c8c8;border:2px solid #20e030;"></div>
<div style="position:absolute;left:263px;top:252px;width:207px;height:1px;background:#dcdcdc;"></div>
<div style="position:absolute;left:297.6px;top:233.00px;font-size:12px;line-height:20px;color:#000;white-space:nowrap;"></div>
<div style="position:absolute;left:442px;top:237px;width:24px;height:11px;background:#1a50c8;border:2px solid #f0a820;"></div>
<div style="position:absolute;left:263px;top:271px;width:207px;height:1px;background:#dcdcdc;"></div>
<div style="position:absolute;left:297.6px;top:252.00px;font-size:12px;line-height:20px;color:#000;white-space:nowrap;"></div>
<div style="position:absolute;left:442px;top:257px;width:24px;height:11px;background:#087d40;border:2px solid #c020d0;"></div>
<div style="position:absolute;left:263px;top:290px;width:207px;height:1px;background:#dcdcdc;"></div>
<div style="position:absolute;left:297.6px;top:271.00px;font-size:12px;line-height:20px;color:#000;white-space:nowrap;"></div>
<div style="position:absolute;left:442px;top:276px;width:24px;height:11px;background:#20b0e8;border:2px solid #e0204a;"></div>
<div style="position:absolute;left:263px;top:309px;width:207px;height:1px;background:#dcdcdc;"></div>
<div style="position:absolute;left:297.6px;top:291.00px;font-size:12px;line-height:20px;color:#000;white-space:nowrap;"></div>
<div style="position:absolute;left:442px;top:295px;width:24px;height:11px;background:#d88020;border:2px solid #0a7a10;"></div>
<div style="position:absolute;left:263px;top:329px;width:207px;height:1px;background:#dcdcdc;"></div>
<div style="position:absolute;left:297.6px;top:310.00px;font-size:12px;line-height:20px;color:#000;white-space:nowrap;"></div>
<div style="position:absolute;left:442px;top:314px;width:24px;height:11px;background:#3030e0;border:2px solid #a0c020;"></div>
<div style="position:absolute;left:263px;top:348px;width:207px;height:1px;background:#dcdcdc;"></div>
<div style="position:absolute;left:297.6px;top:329.00px;font-size:12px;line-height:20px;color:#000;white-space:nowrap;"></div>
<div style="position:absolute;left:442px;top:333px;width:24px;height:11px;background:#e87820;border:2px solid #c8106a;"></div>
<div style="position:absolute;left:263px;top:367px;width:207px;height:1px;background:#dcdcdc;"></div>
<div style="position:absolute;left:297.6px;top:348.00px;font-size:12px;line-height:20px;color:#000;white-space:nowrap;"></div>
<div style="position:absolute;left:442px;top:353px;width:24px;height:11px;background:#5a18c8;border:2px solid #5a18c8;"></div>
<div style="position:absolute;left:263px;top:386px;width:207px;height:1px;background:#dcdcdc;"></div>
<div style="position:absolute;left:297.6px;top:367.00px;font-size:12px;line-height:20px;color:#000;white-space:nowrap;transform-origin:left center;transform:scaleX(0.9579);">rdpinput.exe (5632)</div>
<div style="position:absolute;left:442px;top:372px;width:24px;height:11px;background:#982010;border:2px solid #d08020;"></div>
<div style="position:absolute;left:263px;top:406px;width:207px;height:1px;background:#dcdcdc;"></div>
<div style="position:absolute;left:297.6px;top:387.00px;font-size:12px;line-height:20px;color:#000;white-space:nowrap;transform-origin:left center;transform:scaleX(0.9508);">pwrinit.exe (4320)</div>
<div style="position:absolute;left:442px;top:391px;width:24px;height:11px;background:#1a60c8;border:2px solid #20d0f0;"></div>
<div style="position:absolute;left:263px;top:425px;width:207px;height:1px;background:#dcdcdc;"></div>
<div style="position:absolute;left:297.6px;top:406.00px;font-size:12px;line-height:20px;color:#000;white-space:nowrap;transform-origin:left center;transform:scaleX(0.9327);">userinit.exe (7200)</div>
<div style="position:absolute;left:442px;top:410px;width:24px;height:11px;background:#c86818;border:2px solid #20d040;"></div>
<div style="position:absolute;left:263px;top:444px;width:207px;height:1px;background:#dcdcdc;"></div>
<div style="position:absolute;left:297.6px;top:425.00px;font-size:12px;line-height:20px;color:#000;white-space:nowrap;transform-origin:left center;transform:scaleX(0.9319);">cmd.exe (4896)</div>
<div style="position:absolute;left:442px;top:429px;width:24px;height:11px;background:#1a48c0;border:2px solid #3010c0;"></div>
<div style="position:absolute;left:263px;top:463px;width:207px;height:1px;background:#dcdcdc;"></div>
<div style="position:absolute;left:297.6px;top:444.00px;font-size:12px;line-height:20px;color:#000;white-space:nowrap;transform-origin:left center;transform:scaleX(0.9423);">AppVStreamingUX.exe (4...</div>
<div style="position:absolute;left:442px;top:449px;width:24px;height:11px;background:#e02020;border:2px solid #20d020;"></div>
<div style="position:absolute;left:263px;top:482px;width:207px;height:1px;background:#dcdcdc;"></div>
<div style="position:absolute;left:297.6px;top:463.00px;font-size:12px;line-height:20px;color:#000;white-space:nowrap;transform-origin:left center;transform:scaleX(0.9413);">conhost.exe (6876)</div>
<div style="position:absolute;left:442px;top:468px;width:24px;height:11px;background:#c03818;border:2px solid #d01060;"></div>
<div style="position:absolute;left:263px;top:502px;width:207px;height:1px;background:#dcdcdc;"></div>
<div style="position:absolute;left:297.6px;top:483.00px;font-size:12px;line-height:20px;color:#000;white-space:nowrap;transform-origin:left center;transform:scaleX(0.9209);">acregl.exe (5100)</div>
<div style="position:absolute;left:442px;top:487px;width:24px;height:11px;background:#9020d0;border:2px solid #30c030;"></div>
<div style="position:absolute;left:263px;top:521px;width:207px;height:1px;background:#dcdcdc;"></div>
<div style="position:absolute;left:297.6px;top:502.00px;font-size:12px;line-height:20px;color:#000;white-space:nowrap;transform-origin:left center;transform:scaleX(0.9214);">taskhostex.exe (7756)</div>
<div style="position:absolute;left:442px;top:506px;width:24px;height:11px;background:#2818c0;border:2px solid #10a080;"></div>
<div style="position:absolute;left:263px;top:540px;width:207px;height:1px;background:#dcdcdc;"></div>
<div style="position:absolute;left:297.6px;top:521.00px;font-size:12px;line-height:20px;color:#000;white-space:nowrap;transform-origin:left center;transform:scaleX(0.9407);">GoogleUpdate.exe (4276)</div>
<div style="position:absolute;left:442px;top:525px;width:24px;height:11px;background:#7028d8;border:2px solid #30d8d0;"></div>
<div style="position:absolute;left:263px;top:559px;width:207px;height:1px;background:#dcdcdc;"></div>
<div style="position:absolute;left:297.6px;top:540.00px;font-size:12px;line-height:20px;color:#000;white-space:nowrap;transform-origin:left center;transform:scaleX(0.9275);">msoia.exe (4852)</div>
<div style="position:absolute;left:442px;top:545px;width:24px;height:11px;background:#9020d0;border:2px solid #3030d0;"></div>
<div style="position:absolute;left:263px;top:578px;width:207px;height:1px;background:#dcdcdc;"></div>
<div style="position:absolute;left:297.6px;top:559.00px;font-size:12px;line-height:20px;color:#000;white-space:nowrap;transform-origin:left center;transform:scaleX(0.9278);">taskhost.exe (4828)</div>
<div style="position:absolute;left:442px;top:564px;width:24px;height:11px;background:#083880;border:2px solid #20c8d0;"></div>
<div style="position:absolute;left:263px;top:598px;width:207px;height:1px;background:#dcdcdc;"></div>
<div style="position:absolute;left:297.6px;top:579.00px;font-size:12px;line-height:20px;color:#000;white-space:nowrap;transform-origin:left center;transform:scaleX(0.9520);">GoogleCrashHandler.exe...</div>
<div style="position:absolute;left:442px;top:583px;width:24px;height:11px;background:#d020c0;border:2px solid #90a020;"></div>
<div style="position:absolute;left:263px;top:617px;width:207px;height:1px;background:#dcdcdc;"></div>
<div style="position:absolute;left:297.6px;top:598.00px;font-size:12px;line-height:20px;color:#000;white-space:nowrap;transform-origin:left center;transform:scaleX(0.9514);">GoogleCrashHandler64.e...</div>
<div style="position:absolute;left:442px;top:602px;width:24px;height:11px;background:#1818b0;border:2px solid #20b040;"></div>
<div style="position:absolute;left:263px;top:636px;width:207px;height:1px;background:#dcdcdc;"></div>
<div style="position:absolute;left:297.6px;top:617.00px;font-size:12px;line-height:20px;color:#000;white-space:nowrap;transform-origin:left center;transform:scaleX(0.9354);">consent.exe (8072)</div>
<div style="position:absolute;left:442px;top:621px;width:24px;height:11px;background:#d82090;border:2px solid #d82090;"></div>
<div style="position:absolute;left:263px;top:655px;width:207px;height:1px;background:#dcdcdc;"></div>
<div style="position:absolute;left:297.6px;top:636.00px;font-size:12px;line-height:20px;color:#000;white-space:nowrap;transform-origin:left center;transform:scaleX(0.9621);">pfwsmgr.exe (4560)</div>
<div style="position:absolute;left:442px;top:641px;width:24px;height:11px;background:#18c050;border:2px solid #5018d0;"></div>
<div style="position:absolute;left:263px;top:674px;width:207px;height:1px;background:#dcdcdc;"></div>
<div style="position:absolute;left:297.6px;top:655.00px;font-size:12px;line-height:20px;color:#000;white-space:nowrap;transform-origin:left center;transform:scaleX(0.9326);">taskhost.exe (5268)</div>
<div style="position:absolute;left:442px;top:660px;width:24px;height:11px;background:#083a80;border:2px solid #10a880;"></div>
<div style="position:absolute;left:491px;top:97px;width:1381px;height:604px;background:#fff;"></div>
<div style="position:absolute;left:572px;top:128px;width:1283px;height:1px;background:#dadada"></div>
<div style="position:absolute;left:572px;top:148px;width:1283px;height:1px;background:#dadada"></div>
<div style="position:absolute;left:572px;top:167px;width:1283px;height:1px;background:#dadada"></div>
<div style="position:absolute;left:572px;top:186px;width:1283px;height:1px;background:#dadada"></div>
<div style="position:absolute;left:572px;top:205px;width:1283px;height:1px;background:#dadada"></div>
<div style="position:absolute;left:572px;top:224px;width:1283px;height:1px;background:#dadada"></div>
<div style="position:absolute;left:572px;top:244px;width:1283px;height:1px;background:#dadada"></div>
<div style="position:absolute;left:572px;top:263px;width:1283px;height:1px;background:#dadada"></div>
<div style="position:absolute;left:572px;top:282px;width:1283px;height:1px;background:#dadada"></div>
<div style="position:absolute;left:572px;top:301px;width:1283px;height:1px;background:#dadada"></div>
<div style="position:absolute;left:572px;top:320px;width:1283px;height:1px;background:#dadada"></div>
<div style="position:absolute;left:572px;top:340px;width:1283px;height:1px;background:#dadada"></div>
<div style="position:absolute;left:572px;top:359px;width:1283px;height:1px;background:#dadada"></div>
<div style="position:absolute;left:572px;top:378px;width:1283px;height:1px;background:#dadada"></div>
<div style="position:absolute;left:572px;top:397px;width:1283px;height:1px;background:#dadada"></div>
<div style="position:absolute;left:572px;top:416px;width:1283px;height:1px;background:#dadada"></div>
<div style="position:absolute;left:572px;top:436px;width:1283px;height:1px;background:#dadada"></div>
<div style="position:absolute;left:572px;top:455px;width:1283px;height:1px;background:#dadada"></div>
<div style="position:absolute;left:572px;top:474px;width:1283px;height:1px;background:#dadada"></div>
<div style="position:absolute;left:572px;top:493px;width:1283px;height:1px;background:#dadada"></div>
<div style="position:absolute;left:572px;top:512px;width:1283px;height:1px;background:#dadada"></div>
<div style="position:absolute;left:572px;top:532px;width:1283px;height:1px;background:#dadada"></div>
<div style="position:absolute;left:572px;top:551px;width:1283px;height:1px;background:#dadada"></div>
<div style="position:absolute;left:572px;top:570px;width:1283px;height:1px;background:#dadada"></div>
<div style="position:absolute;left:572px;top:589px;width:1283px;height:1px;background:#dadada"></div>
<div style="position:absolute;left:572px;top:608px;width:1283px;height:1px;background:#dadada"></div>
<div style="position:absolute;left:572px;top:628px;width:1283px;height:1px;background:#dadada"></div>
<div style="position:absolute;left:572px;top:647px;width:1283px;height:1px;background:#dadada"></div>
<div style="position:absolute;left:572px;top:666px;width:1283px;height:1px;background:#dadada"></div>
<div style="position:absolute;left:572px;top:161px;width:963px;height:12px;background:#1bbb1b;border-top:2px solid #d82a1a;border-bottom:2px solid #d82a1a;box-sizing:border-box"></div>
<div style="position:absolute;left:784px;top:180px;width:2px;height:12px;background:#e020a0;border-top:2px solid #0a8a60;border-bottom:2px solid #0a8a60;box-sizing:border-box"></div>
<div style="position:absolute;left:784px;top:199px;width:1071px;height:12px;background:#5a1ccc;border-top:2px solid #1a4ec8;border-bottom:2px solid #1a4ec8;box-sizing:border-box"></div>
<div style="position:absolute;left:785px;top:218px;width:1070px;height:12px;background:#1ccaca;border-top:2px solid #22e030;border-bottom:2px solid #22e030;box-sizing:border-box"></div>
<div style="position:absolute;left:793px;top:238px;width:195px;height:12px;background:#1a50c8;border-top:2px solid #f0a820;border-bottom:2px solid #f0a820;box-sizing:border-box"></div>
<div style="position:absolute;left:795px;top:257px;width:1060px;height:12px;background:#087d40;border-top:2px solid #c020d0;border-bottom:2px solid #c020d0;box-sizing:border-box"></div>
<div style="position:absolute;left:922px;top:276px;width:933px;height:12px;background:#20b0e8;border-top:2px solid #e0204a;border-bottom:2px solid #e0204a;box-sizing:border-box"></div>
<div style="position:absolute;left:961px;top:295px;width:183px;height:12px;background:#d88020;border-top:2px solid #0a7a10;border-bottom:2px solid #0a7a10;box-sizing:border-box"></div>
<div style="position:absolute;left:982px;top:314px;width:2px;height:12px;background:#3030e0;border-top:2px solid #a0c020;border-bottom:2px solid #a0c020;box-sizing:border-box"></div>
<div style="position:absolute;left:983px;top:334px;width:221px;height:12px;background:#e87820;border-top:2px solid #c8106a;border-bottom:2px solid #c8106a;box-sizing:border-box"></div>
<div style="position:absolute;left:984px;top:353px;width:871px;height:12px;background:#5418c0;border-top:2px solid #5418c0;border-bottom:2px solid #5418c0;box-sizing:border-box"></div>
<div style="position:absolute;left:988px;top:372px;width:2px;height:12px;background:#982010;border-top:2px solid #d08020;border-bottom:2px solid #d08020;box-sizing:border-box"></div>
<div style="position:absolute;left:988px;top:391px;width:7px;height:12px;background:#1a60c8;border-top:2px solid #20d0f0;border-bottom:2px solid #20d0f0;box-sizing:border-box"></div>
<div style="position:absolute;left:989px;top:410px;width:566px;height:12px;background:#c86818;border-top:2px solid #20d040;border-bottom:2px solid #20d040;box-sizing:border-box"></div>
<div style="position:absolute;left:990px;top:430px;width:11px;height:12px;background:#1a48c0;border-top:2px solid #3010c0;border-bottom:2px solid #3010c0;box-sizing:border-box"></div>
<div style="position:absolute;left:990px;top:449px;width:865px;height:12px;background:#e02020;border-top:2px solid #20d020;border-bottom:2px solid #20d020;box-sizing:border-box"></div>
<div style="position:absolute;left:990px;top:468px;width:12px;height:12px;background:#c03818;border-top:2px solid #d01060;border-bottom:2px solid #d01060;box-sizing:border-box"></div>
<div style="position:absolute;left:994px;top:487px;width:3px;height:12px;background:#9020d0;border-top:2px solid #30c030;border-bottom:2px solid #30c030;box-sizing:border-box"></div>
<div style="position:absolute;left:994px;top:506px;width:861px;height:12px;background:#2818c0;border-top:2px solid #10a080;border-bottom:2px solid #10a080;box-sizing:border-box"></div>
<div style="position:absolute;left:994px;top:526px;width:14px;height:12px;background:#7028d8;border-top:2px solid #30d8d0;border-bottom:2px solid #30d8d0;box-sizing:border-box"></div>
<div style="position:absolute;left:995px;top:545px;width:2px;height:12px;background:#d020c0;border-top:2px solid #3030d0;border-bottom:2px solid #3030d0;box-sizing:border-box"></div>
<div style="position:absolute;left:995px;top:564px;width:145px;height:12px;background:#083880;border-top:2px solid #20c8d0;border-bottom:2px solid #20c8d0;box-sizing:border-box"></div>
<div style="position:absolute;left:998px;top:583px;width:3px;height:12px;background:#d020c0;border-top:2px solid #90a020;border-bottom:2px solid #90a020;box-sizing:border-box"></div>
<div style="position:absolute;left:998px;top:602px;width:2px;height:12px;background:#1818b0;border-top:2px solid #20b040;border-bottom:2px solid #20b040;box-sizing:border-box"></div>
<div style="position:absolute;left:999px;top:622px;width:35px;height:12px;background:#d82090;border-top:2px solid #d82090;border-bottom:2px solid #d82090;box-sizing:border-box"></div>
<div style="position:absolute;left:1001px;top:641px;width:854px;height:12px;background:#18c050;border-top:2px solid #5018d0;border-bottom:2px solid #5018d0;box-sizing:border-box"></div>
<div style="position:absolute;left:1007px;top:660px;width:30px;height:12px;background:#083a80;border-top:2px solid #10a880;border-bottom:2px solid #10a880;box-sizing:border-box"></div>
<div style="position:absolute;left:572px;top:122px;width:212px;height:12px;background:#1bbb1b;border-top:2px solid #d82a1a;border-bottom:2px solid #d82a1a;box-sizing:border-box"></div>
<div style="position:absolute;left:784px;top:122px;width:10px;height:12px;background:#1ccaca;border-top:2px solid #22e030;border-bottom:2px solid #22e030;box-sizing:border-box"></div>
<div style="position:absolute;left:794px;top:122px;width:128px;height:12px;background:#087d40;border-top:2px solid #c020d0;border-bottom:2px solid #c020d0;box-sizing:border-box"></div>
<div style="position:absolute;left:922px;top:122px;width:39px;height:12px;background:#20b0e8;border-top:2px solid #e0204a;border-bottom:2px solid #e0204a;box-sizing:border-box"></div>
<div style="position:absolute;left:961px;top:122px;width:21px;height:12px;background:#d88820;border-top:2px solid #0a7a10;border-bottom:2px solid #0a7a10;box-sizing:border-box"></div>
<div style="position:absolute;left:982px;top:122px;width:2px;height:12px;background:#2040e0;border-top:2px solid #2040e0;border-bottom:2px solid #2040e0;box-sizing:border-box"></div>
<div style="position:absolute;left:983px;top:122px;width:5px;height:12px;background:#6020c8;border-top:2px solid #6020c8;border-bottom:2px solid #6020c8;box-sizing:border-box"></div>
<div style="position:absolute;left:988px;top:122px;width:2px;height:12px;background:#d08020;border-top:2px solid #20c0c0;border-bottom:2px solid #20c0c0;box-sizing:border-box"></div>
<div style="position:absolute;left:990px;top:122px;width:4px;height:12px;background:#c03818;border-top:2px solid #d01060;border-bottom:2px solid #d01060;box-sizing:border-box"></div>
<div style="position:absolute;left:994px;top:122px;width:5px;height:12px;background:#104090;border-top:2px solid #20c8d0;border-bottom:2px solid #20c8d0;box-sizing:border-box"></div>
<div style="position:absolute;left:999px;top:122px;width:2px;height:12px;background:#c018c0;border-top:2px solid #c018c0;border-bottom:2px solid #c018c0;box-sizing:border-box"></div>
<div style="position:absolute;left:1001px;top:122px;width:6px;height:12px;background:#20c060;border-top:2px solid #6020c8;border-bottom:2px solid #6020c8;box-sizing:border-box"></div>
<div style="position:absolute;left:1007px;top:122px;width:3px;height:12px;background:#104090;border-top:2px solid #10a080;border-bottom:2px solid #10a080;box-sizing:border-box"></div>
<div style="position:absolute;left:1010px;top:122px;width:23px;height:12px;background:#d02020;border-top:2px solid #2030c0;border-bottom:2px solid #2030c0;box-sizing:border-box"></div>
<div style="position:absolute;left:1033px;top:122px;width:15px;height:12px;background:#982010;border-top:2px solid #6020c8;border-bottom:2px solid #6020c8;box-sizing:border-box"></div>
<div style="position:absolute;left:1048px;top:122px;width:6px;height:12px;background:#b83818;border-top:2px solid #a0a020;border-bottom:2px solid #a0a020;box-sizing:border-box"></div>
<div style="position:absolute;left:1054px;top:122px;width:84px;height:12px;background:#982010;border-top:2px solid #6020c8;border-bottom:2px solid #6020c8;box-sizing:border-box"></div>
<div style="position:absolute;left:1138px;top:122px;width:125px;height:12px;background:#78d820;border-top:2px solid #9020a0;border-bottom:2px solid #9020a0;box-sizing:border-box"></div>
<div style="position:absolute;left:1263px;top:122px;width:4px;height:12px;background:#b8b020;border-top:2px solid #108080;border-bottom:2px solid #108080;box-sizing:border-box"></div>
<div style="position:absolute;left:1267px;top:122px;width:31px;height:12px;background:#78d820;border-top:2px solid #9020a0;border-bottom:2px solid #9020a0;box-sizing:border-box"></div>
<div style="position:absolute;left:1298px;top:122px;width:8px;height:12px;background:#b8b020;border-top:2px solid #20a8e0;border-bottom:2px solid #20a8e0;box-sizing:border-box"></div>
<div style="position:absolute;left:1306px;top:122px;width:3px;height:12px;background:#c018c0;border-top:2px solid #e07020;border-bottom:2px solid #e07020;box-sizing:border-box"></div>
<div style="position:absolute;left:1309px;top:122px;width:21px;height:12px;background:#b8b020;border-top:2px solid #20d8e0;border-bottom:2px solid #20d8e0;box-sizing:border-box"></div>
<div style="position:absolute;left:1330px;top:122px;width:16px;height:12px;background:#18c018;border-top:2px solid #9020c0;border-bottom:2px solid #9020c0;box-sizing:border-box"></div>
<div style="position:absolute;left:1346px;top:122px;width:31px;height:12px;background:#18b8c0;border-top:2px solid #10b080;border-bottom:2px solid #10b080;box-sizing:border-box"></div>
<div style="position:absolute;left:1377px;top:122px;width:6px;height:12px;background:#c0c020;border-top:2px solid #20d060;border-bottom:2px solid #20d060;box-sizing:border-box"></div>
<div style="position:absolute;left:1383px;top:122px;width:15px;height:12px;background:#c018c0;border-top:2px solid #900030;border-bottom:2px solid #900030;box-sizing:border-box"></div>
<div style="position:absolute;left:1398px;top:122px;width:3px;height:12px;background:#c0d020;border-top:2px solid #20a040;border-bottom:2px solid #20a040;box-sizing:border-box"></div>
<div style="position:absolute;left:1401px;top:122px;width:3px;height:12px;background:#c018c0;border-top:2px solid #900030;border-bottom:2px solid #900030;box-sizing:border-box"></div>
<div style="position:absolute;left:1404px;top:122px;width:124px;height:12px;background:#2040e0;border-top:2px solid #10a0c0;border-bottom:2px solid #10a0c0;box-sizing:border-box"></div>
<div style="position:absolute;left:1528px;top:122px;width:4px;height:12px;background:#b8b020;border-top:2px solid #6020c0;border-bottom:2px solid #6020c0;box-sizing:border-box"></div>
<div style="position:absolute;left:1532px;top:122px;width:4px;height:12px;background:#e07020;border-top:2px solid #d02020;border-bottom:2px solid #d02020;box-sizing:border-box"></div>
<div style="position:absolute;left:1536px;top:122px;width:2px;height:12px;background:#c018c0;border-top:2px solid #900030;border-bottom:2px solid #900030;box-sizing:border-box"></div>
<div style="position:absolute;left:1538px;top:122px;width:11px;height:12px;background:#1828b8;border-top:2px solid #20a0e0;border-bottom:2px solid #20a0e0;box-sizing:border-box"></div>
<div style="position:absolute;left:1549px;top:122px;width:3px;height:12px;background:#b8b020;border-top:2px solid #6020c0;border-bottom:2px solid #6020c0;box-sizing:border-box"></div>
<div style="position:absolute;left:1552px;top:122px;width:18px;height:12px;background:#1838c8;border-top:2px solid #20a0e0;border-bottom:2px solid #20a0e0;box-sizing:border-box"></div>
<div style="position:absolute;left:1570px;top:122px;width:6px;height:12px;background:#b8b020;border-top:2px solid #2050e0;border-bottom:2px solid #2050e0;box-sizing:border-box"></div>
<div style="position:absolute;left:1576px;top:122px;width:15px;height:12px;background:#1838c8;border-top:2px solid #20a0e0;border-bottom:2px solid #20a0e0;box-sizing:border-box"></div>
<div style="position:absolute;left:1591px;top:122px;width:4px;height:12px;background:#b8b020;border-top:2px solid #20a0e0;border-bottom:2px solid #20a0e0;box-sizing:border-box"></div>
<div style="position:absolute;left:1595px;top:122px;width:49px;height:12px;background:#88b018;border-top:2px solid #20d880;border-bottom:2px solid #20d880;box-sizing:border-box"></div>
<div style="position:absolute;left:1644px;top:122px;width:26px;height:12px;background:#083a80;border-top:2px solid #20d040;border-bottom:2px solid #20d040;box-sizing:border-box"></div>
<div style="position:absolute;left:1670px;top:122px;width:7px;height:12px;background:#d88820;border-top:2px solid #a07020;border-bottom:2px solid #a07020;box-sizing:border-box"></div>
<div style="position:absolute;left:1677px;top:122px;width:3px;height:12px;background:#c8e020;border-top:2px solid #2050e0;border-bottom:2px solid #2050e0;box-sizing:border-box"></div>
<div style="position:absolute;left:1680px;top:122px;width:4px;height:12px;background:#d88820;border-top:2px solid #a07020;border-bottom:2px solid #a07020;box-sizing:border-box"></div>
<div style="position:absolute;left:1684px;top:122px;width:66px;height:12px;background:#d01880;border-top:2px solid #c87020;border-bottom:2px solid #c87020;box-sizing:border-box"></div>
<div style="position:absolute;left:1750px;top:122px;width:6px;height:12px;background:#b8b020;border-top:2px solid #1030a0;border-bottom:2px solid #1030a0;box-sizing:border-box"></div>
<div style="position:absolute;left:1756px;top:122px;width:38px;height:12px;background:#d01880;border-top:2px solid #c87020;border-bottom:2px solid #c87020;box-sizing:border-box"></div>
<div style="position:absolute;left:1794px;top:122px;width:7px;height:12px;background:#b83818;border-top:2px solid #8020d0;border-bottom:2px solid #8020d0;box-sizing:border-box"></div>
<div style="position:absolute;left:1801px;top:122px;width:8px;height:12px;background:#d01880;border-top:2px solid #c87020;border-bottom:2px solid #c87020;box-sizing:border-box"></div>
<div style="position:absolute;left:1809px;top:122px;width:29px;height:12px;background:#b83818;border-top:2px solid #b0d020;border-bottom:2px solid #b0d020;box-sizing:border-box"></div>
<div style="position:absolute;left:1838px;top:122px;width:17px;height:12px;background:#9020d8;border-top:2px solid #6020c8;border-bottom:2px solid #6020c8;box-sizing:border-box"></div>
<div style="position:absolute;left:1855px;top:117px;width:17px;height:557px;background:#f0f0f0;"></div>
<div style="position:absolute;left:1855px;top:137px;width:17px;height:212px;background:#cdcdcd;"></div>
<svg style="position:absolute;left:1859px;top:124px" width="9" height="6" viewBox="0 0 9 6"><path d="M0.5 5 L4.5 1 L8.5 5" fill="none" stroke="#a0a0a0" stroke-width="1"/></svg>
<svg style="position:absolute;left:1859px;top:665px" width="9" height="6" viewBox="0 0 9 6"><path d="M0.5 1 L4.5 5 L8.5 1" fill="none" stroke="#a0a0a0" stroke-width="1"/></svg>
<svg style="position:absolute;left:0;top:0" width="1919" height="821"><line x1="578.5" y1="678" x2="578.5" y2="682" stroke="#999" stroke-width="1"/><line x1="585.5" y1="678" x2="585.5" y2="682" stroke="#999" stroke-width="1"/><line x1="592.5" y1="678" x2="592.5" y2="682" stroke="#999" stroke-width="1"/><line x1="600.5" y1="678" x2="600.5" y2="682" stroke="#999" stroke-width="1"/><line x1="607.5" y1="678" x2="607.5" y2="682" stroke="#999" stroke-width="1"/><line x1="614.5" y1="678" x2="614.5" y2="682" stroke="#999" stroke-width="1"/><line x1="622.5" y1="678" x2="622.5" y2="682" stroke="#999" stroke-width="1"/><line x1="629.5" y1="678" x2="629.5" y2="682" stroke="#999" stroke-width="1"/><line x1="636.5" y1="678" x2="636.5" y2="682" stroke="#999" stroke-width="1"/><line x1="643.5" y1="677" x2="643.5" y2="688" stroke="#000" stroke-width="1"/><line x1="651.5" y1="678" x2="651.5" y2="682" stroke="#999" stroke-width="1"/><line x1="658.5" y1="678" x2="658.5" y2="682" stroke="#999" stroke-width="1"/><line x1="665.5" y1="678" x2="665.5" y2="682" stroke="#999" stroke-width="1"/><line x1="673.5" y1="678" x2="673.5" y2="682" stroke="#999" stroke-width="1"/><line x1="680.5" y1="678" x2="680.5" y2="682" stroke="#999" stroke-width="1"/><line x1="687.5" y1="678" x2="687.5" y2="682" stroke="#999" stroke-width="1"/><line x1="694.5" y1="678" x2="694.5" y2="682" stroke="#999" stroke-width="1"/><line x1="702.5" y1="678" x2="702.5" y2="682" stroke="#999" stroke-width="1"/><line x1="709.5" y1="678" x2="709.5" y2="682" stroke="#999" stroke-width="1"/><line x1="716.5" y1="677" x2="716.5" y2="688" stroke="#000" stroke-width="1"/><line x1="724.5" y1="678" x2="724.5" y2="682" stroke="#999" stroke-width="1"/><line x1="731.5" y1="678" x2="731.5" y2="682" stroke="#999" stroke-width="1"/><line x1="738.5" y1="678" x2="738.5" y2="682" stroke="#999" stroke-width="1"/><line x1="746.5" y1="678" x2="746.5" y2="682" stroke="#999" stroke-width="1"/><line x1="753.5" y1="678" x2="753.5" y2="682" stroke="#999" stroke-width="1"/><line x1="760.5" y1="678" x2="760.5" y2="682" stroke="#999" stroke-width="1"/><line x1="767.5" y1="678" x2="767.5" y2="682" stroke="#999" stroke-width="1"/><line x1="775.5" y1="678" x2="775.5" y2="682" stroke="#999" stroke-width="1"/><line x1="782.5" y1="678" x2="782.5" y2="682" stroke="#999" stroke-width="1"/><line x1="789.5" y1="677" x2="789.5" y2="688" stroke="#000" stroke-width="1"/><line x1="797.5" y1="678" x2="797.5" y2="682" stroke="#999" stroke-width="1"/><line x1="804.5" y1="678" x2="804.5" y2="682" stroke="#999" stroke-width="1"/><line x1="811.5" y1="678" x2="811.5" y2="682" stroke="#999" stroke-width="1"/><line x1="818.5" y1="678" x2="818.5" y2="682" stroke="#999" stroke-width="1"/><line x1="826.5" y1="678" x2="826.5" y2="682" stroke="#999" stroke-width="1"/><line x1="833.5" y1="678" x2="833.5" y2="682" stroke="#999" stroke-width="1"/><line x1="840.5" y1="678" x2="840.5" y2="682" stroke="#999" stroke-width="1"/><line x1="848.5" y1="678" x2="848.5" y2="682" stroke="#999" stroke-width="1"/><line x1="855.5" y1="678" x2="855.5" y2="682" stroke="#999" stroke-width="1"/><line x1="862.5" y1="677" x2="862.5" y2="688" stroke="#000" stroke-width="1"/><line x1="869.5" y1="678" x2="869.5" y2="682" stroke="#999" stroke-width="1"/><line x1="877.5" y1="678" x2="877.5" y2="682" stroke="#999" stroke-width="1"/><line x1="884.5" y1="678" x2="884.5" y2="682" stroke="#999" stroke-width="1"/><line x1="891.5" y1="678" x2="891.5" y2="682" stroke="#999" stroke-width="1"/><line x1="899.5" y1="678" x2="899.5" y2="682" stroke="#999" stroke-width="1"/><line x1="906.5" y1="678" x2="906.5" y2="682" stroke="#999" stroke-width="1"/><line x1="913.5" y1="678" x2="913.5" y2="682" stroke="#999" stroke-width="1"/><line x1="920.5" y1="678" x2="920.5" y2="682" stroke="#999" stroke-width="1"/><line x1="928.5" y1="678" x2="928.5" y2="682" stroke="#999" stroke-width="1"/><line x1="935.5" y1="677" x2="935.5" y2="688" stroke="#000" stroke-width="1"/><line x1="942.5" y1="678" x2="942.5" y2="682" stroke="#999" stroke-width="1"/><line x1="950.5" y1="678" x2="950.5" y2="682" stroke="#999" stroke-width="1"/><line x1="957.5" y1="678" x2="957.5" y2="682" stroke="#999" stroke-width="1"/><line x1="964.5" y1="678" x2="964.5" y2="682" stroke="#999" stroke-width="1"/><line x1="971.5" y1="678" x2="971.5" y2="682" stroke="#999" stroke-width="1"/><line x1="979.5" y1="678" x2="979.5" y2="682" stroke="#999" stroke-width="1"/><line x1="986.5" y1="678" x2="986.5" y2="682" stroke="#999" stroke-width="1"/><line x1="993.5" y1="678" x2="993.5" y2="682" stroke="#999" stroke-width="1"/><line x1="1001.5" y1="678" x2="1001.5" y2="682" stroke="#999" stroke-width="1"/><line x1="1008.5" y1="677" x2="1008.5" y2="688" stroke="#000" stroke-width="1"/><line x1="1015.5" y1="678" x2="1015.5" y2="682" stroke="#999" stroke-width="1"/><line x1="1022.5" y1="678" x2="1022.5" y2="682" stroke="#999" stroke-width="1"/><line x1="1030.5" y1="678" x2="1030.5" y2="682" stroke="#999" stroke-width="1"/><line x1="1037.5" y1="678" x2="1037.5" y2="682" stroke="#999" stroke-width="1"/><line x1="1044.5" y1="678" x2="1044.5" y2="682" stroke="#999" stroke-width="1"/><line x1="1052.5" y1="678" x2="1052.5" y2="682" stroke="#999" stroke-width="1"/><line x1="1059.5" y1="678" x2="1059.5" y2="682" stroke="#999" stroke-width="1"/><line x1="1066.5" y1="678" x2="1066.5" y2="682" stroke="#999" stroke-width="1"/><line x1="1073.5" y1="678" x2="1073.5" y2="682" stroke="#999" stroke-width="1"/><line x1="1081.5" y1="677" x2="1081.5" y2="688" stroke="#000" stroke-width="1"/><line x1="1088.5" y1="678" x2="1088.5" y2="682" stroke="#999" stroke-width="1"/><line x1="1095.5" y1="678" x2="1095.5" y2="682" stroke="#999" stroke-width="1"/><line x1="1103.5" y1="678" x2="1103.5" y2="682" stroke="#999" stroke-width="1"/><line x1="1110.5" y1="678" x2="1110.5" y2="682" stroke="#999" stroke-width="1"/><line x1="1117.5" y1="678" x2="1117.5" y2="682" stroke="#999" stroke-width="1"/><line x1="1124.5" y1="678" x2="1124.5" y2="682" stroke="#999" stroke-width="1"/><line x1="1132.5" y1="678" x2="1132.5" y2="682" stroke="#999" stroke-width="1"/><line x1="1139.5" y1="678" x2="1139.5" y2="682" stroke="#999" stroke-width="1"/><line x1="1146.5" y1="678" x2="1146.5" y2="682" stroke="#999" stroke-width="1"/><line x1="1154.5" y1="677" x2="1154.5" y2="688" stroke="#000" stroke-width="1"/><line x1="1161.5" y1="678" x2="1161.5" y2="682" stroke="#999" stroke-width="1"/><line x1="1168.5" y1="678" x2="1168.5" y2="682" stroke="#999" stroke-width="1"/><line x1="1176.5" y1="678" x2="1176.5" y2="682" stroke="#999" stroke-width="1"/><line x1="1183.5" y1="678" x2="1183.5" y2="682" stroke="#999" stroke-width="1"/><line x1="1190.5" y1="678" x2="1190.5" y2="682" stroke="#999" stroke-width="1"/><line x1="1197.5" y1="678" x2="1197.5" y2="682" stroke="#999" stroke-width="1"/><line x1="1205.5" y1="678" x2="1205.5" y2="682" stroke="#999" stroke-width="1"/><line x1="1212.5" y1="678" x2="1212.5" y2="682" stroke="#999" stroke-width="1"/><line x1="1219.5" y1="678" x2="1219.5" y2="682" stroke="#999" stroke-width="1"/><line x1="1227.5" y1="677" x2="1227.5" y2="688" stroke="#000" stroke-width="1"/><line x1="1234.5" y1="678" x2="1234.5" y2="682" stroke="#999" stroke-width="1"/><line x1="1241.5" y1="678" x2="1241.5" y2="682" stroke="#999" stroke-width="1"/><line x1="1248.5" y1="678" x2="1248.5" y2="682" stroke="#999" stroke-width="1"/><line x1="1256.5" y1="678" x2="1256.5" y2="682" stroke="#999" stroke-width="1"/><line x1="1263.5" y1="678" x2="1263.5" y2="682" stroke="#999" stroke-width="1"/><line x1="1270.5" y1="678" x2="1270.5" y2="682" stroke="#999" stroke-width="1"/><line x1="1278.5" y1="678" x2="1278.5" y2="682" stroke="#999" stroke-width="1"/><line x1="1285.5" y1="678" x2="1285.5" y2="682" stroke="#999" stroke-width="1"/><line x1="1292.5" y1="678" x2="1292.5" y2="682" stroke="#999" stroke-width="1"/><line x1="1299.5" y1="677" x2="1299.5" y2="688" stroke="#000" stroke-width="1"/><line x1="1307.5" y1="678" x2="1307.5" y2="682" stroke="#999" stroke-width="1"/><line x1="1314.5" y1="678" x2="1314.5" y2="682" stroke="#999" stroke-width="1"/><line x1="1321.5" y1="678" x2="1321.5" y2="682" stroke="#999" stroke-width="1"/><line x1="1329.5" y1="678" x2="1329.5" y2="682" stroke="#999" stroke-width="1"/><line x1="1336.5" y1="678" x2="1336.5" y2="682" stroke="#999" stroke-width="1"/><line x1="1343.5" y1="678" x2="1343.5" y2="682" stroke="#999" stroke-width="1"/><line x1="1350.5" y1="678" x2="1350.5" y2="682" stroke="#999" stroke-width="1"/><line x1="1358.5" y1="678" x2="1358.5" y2="682" stroke="#999" stroke-width="1"/><line x1="1365.5" y1="678" x2="1365.5" y2="682" stroke="#999" stroke-width="1"/><line x1="1372.5" y1="677" x2="1372.5" y2="688" stroke="#000" stroke-width="1"/><line x1="1380.5" y1="678" x2="1380.5" y2="682" stroke="#999" stroke-width="1"/><line x1="1387.5" y1="678" x2="1387.5" y2="682" stroke="#999" stroke-width="1"/><line x1="1394.5" y1="678" x2="1394.5" y2="682" stroke="#999" stroke-width="1"/><line x1="1401.5" y1="678" x2="1401.5" y2="682" stroke="#999" stroke-width="1"/><line x1="1409.5" y1="678" x2="1409.5" y2="682" stroke="#999" stroke-width="1"/><line x1="1416.5" y1="678" x2="1416.5" y2="682" stroke="#999" stroke-width="1"/><line x1="1423.5" y1="678" x2="1423.5" y2="682" stroke="#999" stroke-width="1"/><line x1="1431.5" y1="678" x2="1431.5" y2="682" stroke="#999" stroke-width="1"/><line x1="1438.5" y1="678" x2="1438.5" y2="682" stroke="#999" stroke-width="1"/><line x1="1445.5" y1="677" x2="1445.5" y2="688" stroke="#000" stroke-width="1"/><line x1="1452.5" y1="678" x2="1452.5" y2="682" stroke="#999" stroke-width="1"/><line x1="1460.5" y1="678" x2="1460.5" y2="682" stroke="#999" stroke-width="1"/><line x1="1467.5" y1="678" x2="1467.5" y2="682" stroke="#999" stroke-width="1"/><line x1="1474.5" y1="678" x2="1474.5" y2="682" stroke="#999" stroke-width="1"/><line x1="1482.5" y1="678" x2="1482.5" y2="682" stroke="#999" stroke-width="1"/><line x1="1489.5" y1="678" x2="1489.5" y2="682" stroke="#999" stroke-width="1"/><line x1="1496.5" y1="678" x2="1496.5" y2="682" stroke="#999" stroke-width="1"/><line x1="1503.5" y1="678" x2="1503.5" y2="682" stroke="#999" stroke-width="1"/><line x1="1511.5" y1="678" x2="1511.5" y2="682" stroke="#999" stroke-width="1"/><line x1="1518.5" y1="677" x2="1518.5" y2="688" stroke="#000" stroke-width="1"/><line x1="1525.5" y1="678" x2="1525.5" y2="682" stroke="#999" stroke-width="1"/><line x1="1533.5" y1="678" x2="1533.5" y2="682" stroke="#999" stroke-width="1"/><line x1="1540.5" y1="678" x2="1540.5" y2="682" stroke="#999" stroke-width="1"/><line x1="1547.5" y1="678" x2="1547.5" y2="682" stroke="#999" stroke-width="1"/><line x1="1554.5" y1="678" x2="1554.5" y2="682" stroke="#999" stroke-width="1"/><line x1="1562.5" y1="678" x2="1562.5" y2="682" stroke="#999" stroke-width="1"/><line x1="1569.5" y1="678" x2="1569.5" y2="682" stroke="#999" stroke-width="1"/><line x1="1576.5" y1="678" x2="1576.5" y2="682" stroke="#999" stroke-width="1"/><line x1="1584.5" y1="678" x2="1584.5" y2="682" stroke="#999" stroke-width="1"/><line x1="1591.5" y1="677" x2="1591.5" y2="688" stroke="#000" stroke-width="1"/><line x1="1598.5" y1="678" x2="1598.5" y2="682" stroke="#999" stroke-width="1"/><line x1="1605.5" y1="678" x2="1605.5" y2="682" stroke="#999" stroke-width="1"/><line x1="1613.5" y1="678" x2="1613.5" y2="682" stroke="#999" stroke-width="1"/><line x1="1620.5" y1="678" x2="1620.5" y2="682" stroke="#999" stroke-width="1"/><line x1="1627.5" y1="678" x2="1627.5" y2="682" stroke="#999" stroke-width="1"/><line x1="1635.5" y1="678" x2="1635.5" y2="682" stroke="#999" stroke-width="1"/><line x1="1642.5" y1="678" x2="1642.5" y2="682" stroke="#999" stroke-width="1"/><line x1="1649.5" y1="678" x2="1649.5" y2="682" stroke="#999" stroke-width="1"/><line x1="1657.5" y1="678" x2="1657.5" y2="682" stroke="#999" stroke-width="1"/><line x1="1664.5" y1="677" x2="1664.5" y2="688" stroke="#000" stroke-width="1"/><line x1="1671.5" y1="678" x2="1671.5" y2="682" stroke="#999" stroke-width="1"/><line x1="1678.5" y1="678" x2="1678.5" y2="682" stroke="#999" stroke-width="1"/><line x1="1686.5" y1="678" x2="1686.5" y2="682" stroke="#999" stroke-width="1"/><line x1="1693.5" y1="678" x2="1693.5" y2="682" stroke="#999" stroke-width="1"/><line x1="1700.5" y1="678" x2="1700.5" y2="682" stroke="#999" stroke-width="1"/><line x1="1708.5" y1="678" x2="1708.5" y2="682" stroke="#999" stroke-width="1"/><line x1="1715.5" y1="678" x2="1715.5" y2="682" stroke="#999" stroke-width="1"/><line x1="1722.5" y1="678" x2="1722.5" y2="682" stroke="#999" stroke-width="1"/><line x1="1729.5" y1="678" x2="1729.5" y2="682" stroke="#999" stroke-width="1"/><line x1="1737.5" y1="677" x2="1737.5" y2="688" stroke="#000" stroke-width="1"/><line x1="1744.5" y1="678" x2="1744.5" y2="682" stroke="#999" stroke-width="1"/><line x1="1751.5" y1="678" x2="1751.5" y2="682" stroke="#999" stroke-width="1"/><line x1="1759.5" y1="678" x2="1759.5" y2="682" stroke="#999" stroke-width="1"/><line x1="1766.5" y1="678" x2="1766.5" y2="682" stroke="#999" stroke-width="1"/><line x1="1773.5" y1="678" x2="1773.5" y2="682" stroke="#999" stroke-width="1"/><line x1="1780.5" y1="678" x2="1780.5" y2="682" stroke="#999" stroke-width="1"/><line x1="1788.5" y1="678" x2="1788.5" y2="682" stroke="#999" stroke-width="1"/><line x1="1795.5" y1="678" x2="1795.5" y2="682" stroke="#999" stroke-width="1"/><line x1="1802.5" y1="678" x2="1802.5" y2="682" stroke="#999" stroke-width="1"/><line x1="1810.5" y1="677" x2="1810.5" y2="688" stroke="#000" stroke-width="1"/><line x1="1817.5" y1="678" x2="1817.5" y2="682" stroke="#999" stroke-width="1"/><line x1="1824.5" y1="678" x2="1824.5" y2="682" stroke="#999" stroke-width="1"/><line x1="1831.5" y1="678" x2="1831.5" y2="682" stroke="#999" stroke-width="1"/><line x1="1839.5" y1="678" x2="1839.5" y2="682" stroke="#999" stroke-width="1"/><line x1="1846.5" y1="678" x2="1846.5" y2="682" stroke="#999" stroke-width="1"/><line x1="1853.5" y1="678" x2="1853.5" y2="682" stroke="#999" stroke-width="1"/></svg>
<div style="position:absolute;left:571px;top:686.00px;font-size:10px;line-height:20px;color:#000;white-space:nowrap;">0</div>
<div style="position:absolute;left:640.7px;top:686.00px;font-size:10px;line-height:20px;color:#000;white-space:nowrap;">2</div>
<div style="position:absolute;left:713.6px;top:686.00px;font-size:10px;line-height:20px;color:#000;white-space:nowrap;">4</div>
<div style="position:absolute;left:786.4px;top:686.00px;font-size:10px;line-height:20px;color:#000;white-space:nowrap;">6</div>
<div style="position:absolute;left:859.3px;top:686.00px;font-size:10px;line-height:20px;color:#000;white-space:nowrap;">8</div>
<div style="position:absolute;left:929.4px;top:686.00px;font-size:10px;line-height:20px;color:#000;white-space:nowrap;">10</div>
<div style="position:absolute;left:1002.3px;top:686.00px;font-size:10px;line-height:20px;color:#000;white-space:nowrap;">12</div>
<div style="position:absolute;left:1075.2px;top:686.00px;font-size:10px;line-height:20px;color:#000;white-space:nowrap;">14</div>
<div style="position:absolute;left:1148.0px;top:686.00px;font-size:10px;line-height:20px;color:#000;white-space:nowrap;">16</div>
<div style="position:absolute;left:1220.9px;top:686.00px;font-size:10px;line-height:20px;color:#000;white-space:nowrap;">18</div>
<div style="position:absolute;left:1293.8px;top:686.00px;font-size:10px;line-height:20px;color:#000;white-space:nowrap;">20</div>
<div style="position:absolute;left:1366.7px;top:686.00px;font-size:10px;line-height:20px;color:#000;white-space:nowrap;">22</div>
<div style="position:absolute;left:1439.6px;top:686.00px;font-size:10px;line-height:20px;color:#000;white-space:nowrap;">24</div>
<div style="position:absolute;left:1512.4px;top:686.00px;font-size:10px;line-height:20px;color:#000;white-space:nowrap;">26</div>
<div style="position:absolute;left:1585.3px;top:686.00px;font-size:10px;line-height:20px;color:#000;white-space:nowrap;">28</div>
<div style="position:absolute;left:1658.2px;top:686.00px;font-size:10px;line-height:20px;color:#000;white-space:nowrap;">30</div>
<div style="position:absolute;left:1731.1px;top:686.00px;font-size:10px;line-height:20px;color:#000;white-space:nowrap;">32</div>
<div style="position:absolute;left:1804.0px;top:686.00px;font-size:10px;line-height:20px;color:#000;white-space:nowrap;">34</div>
<div style="position:absolute;left:263px;top:701px;width:1609px;height:5px;background:#d4d4d4;"></div>
<div style="position:absolute;left:263px;top:706px;width:1609px;height:115px;background:#fff;"></div>
<div style="position:absolute;left:263px;top:726px;width:325px;height:95px;background:#f0f0f0;"></div>
<div style="position:absolute;left:1565px;top:726px;width:289px;height:95px;background:#f0f0f0;"></div>
<div style="position:absolute;left:1854px;top:706px;width:18px;height:115px;background:#f0f0f0;"></div>
<svg style="position:absolute;left:1860px;top:732px" width="9" height="6" viewBox="0 0 9 6"><path d="M0.5 5 L4.5 1 L8.5 5" fill="none" stroke="#a0a0a0" stroke-width="1"/></svg>
<div style="position:absolute;left:263px;top:706px;width:1591px;height:20px;background:linear-gradient(#ffffff 0%,#ffffff 45%,#eef0f2 100%);border-bottom:1px solid #d5d5d5;"></div>
<div style="position:absolute;left:1565px;top:706px;width:240px;height:21px;background:linear-gradient(#f6fbfe 0%,#e6f2fa 50%,#d6eaf7 100%);border:1px solid #8cc8ee;border-top:none;"></div>
<div style="position:absolute;left:1685px;top:706px;width:1px;height:20px;background:#8cc8ee;"></div>
<div style="position:absolute;left:308px;top:706px;width:1px;height:115px;background:#dcdcdc;"></div>
<div style="position:absolute;left:388px;top:706px;width:1px;height:115px;background:#dcdcdc;"></div>
<div style="position:absolute;left:713px;top:706px;width:1px;height:115px;background:#dcdcdc;"></div>
<div style="position:absolute;left:863px;top:706px;width:1px;height:115px;background:#dcdcdc;"></div>
<div style="position:absolute;left:946px;top:706px;width:1px;height:115px;background:#dcdcdc;"></div>
<div style="position:absolute;left:1805px;top:706px;width:1px;height:115px;background:#dcdcdc;"></div>
<div style="position:absolute;left:266px;top:707.00px;font-size:12px;line-height:20px;color:#000;white-space:nowrap;transform-origin:left center;transform:scaleX(0.9602);">Line #</div>
<div style="position:absolute;left:311.1px;top:707.00px;font-size:12px;line-height:20px;color:#000;white-space:nowrap;transform-origin:left center;transform:scaleX(1.0183);">Lifetime</div>
<div style="position:absolute;left:391px;top:707.00px;font-size:12px;line-height:20px;color:#000;white-space:nowrap;transform-origin:left center;transform:scaleX(0.9225);">Process</div>
<div style="position:absolute;left:596.2px;top:707.00px;font-size:12px;line-height:20px;color:#000;white-space:nowrap;transform-origin:left center;transform:scaleX(0.9795);">Duration (s)</div>
<div style="position:absolute;left:694px;top:711.00px;font-size:9px;line-height:20px;color:#222;white-space:nowrap;transform-origin:left center;transform:scaleX(0.8641);">Sum</div>
<div style="position:absolute;left:716.2px;top:707.00px;font-size:12px;line-height:20px;color:#000;white-space:nowrap;transform-origin:left center;transform:scaleX(1.0038);">Modern Application Frie...</div>
<div style="position:absolute;left:866.1px;top:707.00px;font-size:12px;line-height:20px;color:#000;white-space:nowrap;transform-origin:left center;transform:scaleX(0.9413);">Hosted Ser...</div>
<div style="position:absolute;left:949px;top:707.00px;font-size:12px;line-height:20px;color:#000;white-space:nowrap;transform-origin:left center;transform:scaleX(1.0077);">Command Line</div>
<div style="position:absolute;left:1568px;top:707.00px;font-size:12px;line-height:20px;color:#000;white-space:nowrap;transform-origin:left center;transform:scaleX(0.9623);">Start Time (s)</div>
<div style="position:absolute;left:1667.7px;top:711.00px;font-size:9px;line-height:20px;color:#222;white-space:nowrap;transform-origin:left center;transform:scaleX(0.9369);">Min</div>
<div style="position:absolute;left:1678px;top:701.00px;font-size:7px;line-height:20px;color:#222;white-space:nowrap;">0</div>
<div style="position:absolute;left:1688.2px;top:707.00px;font-size:12px;line-height:20px;color:#000;white-space:nowrap;transform-origin:left center;transform:scaleX(0.9586);">End Time (s)</div>
<div style="position:absolute;left:1786.8px;top:711.00px;font-size:9px;line-height:20px;color:#222;white-space:nowrap;transform-origin:left center;transform:scaleX(0.8815);">Max</div>
<div style="position:absolute;left:1798px;top:701.00px;font-size:7px;line-height:20px;color:#222;white-space:nowrap;">1</div>
<div style="position:absolute;left:1808.2px;top:707.00px;font-size:12px;line-height:20px;color:#000;white-space:nowrap;transform-origin:left center;transform:scaleX(0.9564);">Legend</div>
<svg style="position:absolute;left:1621px;top:707px" width="8" height="4"><path d="M0 4 L4 0 L8 4 Z" fill="#8ab8d8"/></svg>
<svg style="position:absolute;left:1741px;top:707px" width="8" height="4"><path d="M0 4 L4 0 L8 4 Z" fill="#8ab8d8"/></svg>
<div style="position:absolute;left:263px;top:726px;width:1591px;height:95px;overflow:hidden">
<div style="position:absolute;left:0;top:9px;width:1591px;height:1px;background:#dcdcdc"></div>
<div style="position:absolute;right:1547.5px;top:-10.00px;font-size:12px;line-height:20px;color:#000;white-space:nowrap;transform:scaleX(0.92);transform-origin:right center;">41</div>
<div style="position:absolute;left:143px;top:-10.00px;font-size:12px;line-height:20px;color:#000;white-space:nowrap;transform:scaleX(0.94);transform-origin:left center;">pwrgnd.exe (2000)</div>
<div style="position:absolute;right:1143px;top:-10.00px;font-size:12px;line-height:20px;color:#e81123;white-space:nowrap;transform:scaleX(0.894);transform-origin:right center;">0,223014700</div>
<div style="position:absolute;left:453px;top:-10.00px;font-size:12px;line-height:20px;color:#000;white-space:nowrap;transform:scaleX(0.98);transform-origin:left center;">&lt;None&gt;</div>
<div style="position:absolute;left:683px;top:0;width:614px;height:95px;overflow:hidden"><div style="position:absolute;left:2px;top:-10.00px;font-size:12px;line-height:20px;color:#000;white-space:nowrap;transform:scaleX(0.962);transform-origin:left center;">C:\PROGRA~2\RESSOF~1\WORKSP~1\pwrgnd.exe" /RWS C:\Users\TEST02~1\AppData\Local\RES\WM\6\pwr6521.</div></div>
<div style="position:absolute;right:171px;top:-10.00px;font-size:12px;line-height:20px;color:#6d6d6d;white-space:nowrap;transform:scaleX(0.892);transform-origin:right center;">22,130212930</div>
<div style="position:absolute;right:51px;top:-10.00px;font-size:12px;line-height:20px;color:#c42b1c;white-space:nowrap;transform:scaleX(0.89);transform-origin:right center;">22,363827240</div>
<div style="position:absolute;left:1544px;top:-5px;width:24px;height:11px;background:#c8b818;border:2px solid #c8b818;box-sizing:border-box"></div>
<div style="position:absolute;left:0;top:29px;width:1591px;height:1px;background:#dcdcdc"></div>
<div style="position:absolute;right:1547.5px;top:9.00px;font-size:12px;line-height:20px;color:#000;white-space:nowrap;transform:scaleX(0.92);transform-origin:right center;">42</div>
<div style="position:absolute;left:143px;top:9.00px;font-size:12px;line-height:20px;color:#000;white-space:nowrap;transform:scaleX(0.94);transform-origin:left center;">rundll32.exe (4296)</div>
<div style="position:absolute;right:1143px;top:9.00px;font-size:12px;line-height:20px;color:#e81123;white-space:nowrap;transform:scaleX(0.894);transform-origin:right center;">0,039090234</div>
<div style="position:absolute;left:453px;top:9.00px;font-size:12px;line-height:20px;color:#000;white-space:nowrap;transform:scaleX(0.98);transform-origin:left center;">&lt;None&gt;</div>
<div style="position:absolute;left:683px;top:0;width:614px;height:95px;overflow:hidden"><div style="position:absolute;left:2px;top:9.00px;font-size:12px;line-height:20px;color:#000;white-space:nowrap;transform:scaleX(0.962);transform-origin:left center;">rundll32.exe user32.dll,UpdatePerUserSystemParameters 1,true</div></div>
<div style="position:absolute;right:171px;top:9.00px;font-size:12px;line-height:20px;color:#6d6d6d;white-space:nowrap;transform:scaleX(0.892);transform-origin:right center;">22,247778907</div>
<div style="position:absolute;right:51px;top:9.00px;font-size:12px;line-height:20px;color:#c42b1c;white-space:nowrap;transform:scaleX(0.89);transform-origin:right center;">22,286869141</div>
<div style="position:absolute;left:1544px;top:14px;width:24px;height:11px;background:#c8e020;border:2px solid #20e040;box-sizing:border-box"></div>
<div style="position:absolute;left:0;top:48px;width:1591px;height:1px;background:#dcdcdc"></div>
<div style="position:absolute;right:1547.5px;top:29.00px;font-size:12px;line-height:20px;color:#000;white-space:nowrap;transform:scaleX(0.92);transform-origin:right center;">43</div>
<div style="position:absolute;left:143px;top:29.00px;font-size:12px;line-height:20px;color:#000;white-space:nowrap;transform:scaleX(0.94);transform-origin:left center;">pwrmail.exe (3872)</div>
<div style="position:absolute;right:1143px;top:29.00px;font-size:12px;line-height:20px;color:#e81123;white-space:nowrap;transform:scaleX(0.894);transform-origin:right center;">12,948388761</div>
<div style="position:absolute;left:453px;top:29.00px;font-size:12px;line-height:20px;color:#000;white-space:nowrap;transform:scaleX(0.98);transform-origin:left center;">&lt;None&gt;</div>
<div style="position:absolute;left:683px;top:0;width:614px;height:95px;overflow:hidden"><div style="position:absolute;left:2px;top:29.00px;font-size:12px;line-height:20px;color:#000;white-space:nowrap;transform:scaleX(0.962);transform-origin:left center;">C:\PROGRA~2\RESSOF~1\WORKSP~1\pwrmail.exe "C:\Users\TEST02~1\AppData\Local\RES\WM\6\pwr65A7.tmp.su</div></div>
<div style="position:absolute;right:171px;top:29.00px;font-size:12px;line-height:20px;color:#6d6d6d;white-space:nowrap;transform:scaleX(0.892);transform-origin:right center;">22,286055839</div>
<div style="position:absolute;right:51px;top:29.00px;font-size:12px;line-height:20px;color:#c42b1c;white-space:nowrap;transform:scaleX(0.89);transform-origin:right center;">35,234444600</div>
<div style="position:absolute;left:1544px;top:34px;width:24px;height:11px;background:#c018c0;border:2px solid #900030;box-sizing:border-box"></div>
<div style="position:absolute;left:0;top:67px;width:1591px;height:1px;background:#dcdcdc"></div>
<div style="position:absolute;right:1547.5px;top:48.00px;font-size:12px;line-height:20px;color:#000;white-space:nowrap;transform:scaleX(0.92);transform-origin:right center;">44</div>
<div style="position:absolute;left:143px;top:48.00px;font-size:12px;line-height:20px;color:#000;white-space:nowrap;transform:scaleX(0.94);transform-origin:left center;">rundll32.exe (1256)</div>
<div style="position:absolute;right:1143px;top:48.00px;font-size:12px;line-height:20px;color:#e81123;white-space:nowrap;transform:scaleX(0.894);transform-origin:right center;">0,026910054</div>
<div style="position:absolute;left:453px;top:48.00px;font-size:12px;line-height:20px;color:#000;white-space:nowrap;transform:scaleX(0.98);transform-origin:left center;">&lt;None&gt;</div>
<div style="position:absolute;left:683px;top:0;width:614px;height:95px;overflow:hidden"><div style="position:absolute;left:2px;top:48.00px;font-size:12px;line-height:20px;color:#000;white-space:nowrap;transform:scaleX(0.962);transform-origin:left center;">rundll32.exe user32.dll,UpdatePerUserSystemParameters 1,true</div></div>
<div style="position:absolute;right:171px;top:48.00px;font-size:12px;line-height:20px;color:#6d6d6d;white-space:nowrap;transform:scaleX(0.892);transform-origin:right center;">22,697153828</div>
<div style="position:absolute;right:51px;top:48.00px;font-size:12px;line-height:20px;color:#c42b1c;white-space:nowrap;transform:scaleX(0.89);transform-origin:right center;">22,724063882</div>
<div style="position:absolute;left:1544px;top:53px;width:24px;height:11px;background:#c8e020;border:2px solid #10b0b0;box-sizing:border-box"></div>
<div style="position:absolute;left:0;top:87px;width:1591px;height:1px;background:#dcdcdc"></div>
<div style="position:absolute;right:1547.5px;top:67.00px;font-size:12px;line-height:20px;color:#000;white-space:nowrap;transform:scaleX(0.92);transform-origin:right center;">45</div>
<div style="position:absolute;left:143px;top:67.00px;font-size:12px;line-height:20px;color:#000;white-space:nowrap;transform:scaleX(0.94);transform-origin:left center;">pwrmail.exe (5148)</div>
<div style="position:absolute;right:1143px;top:67.00px;font-size:12px;line-height:20px;color:#e81123;white-space:nowrap;transform:scaleX(0.894);transform-origin:right center;">12,379919514</div>
<div style="position:absolute;left:453px;top:67.00px;font-size:12px;line-height:20px;color:#000;white-space:nowrap;transform:scaleX(0.98);transform-origin:left center;">&lt;None&gt;</div>
<div style="position:absolute;left:683px;top:0;width:614px;height:95px;overflow:hidden"><div style="position:absolute;left:2px;top:67.00px;font-size:12px;line-height:20px;color:#000;white-space:nowrap;transform:scaleX(0.962);transform-origin:left center;">C:\PROGRA~2\RESSOF~1\WORKSP~1\pwrmail.exe "C:\Users\TEST02~1\AppData\Local\RES\WM\6\pwr67F1.tmp.su</div></div>
<div style="position:absolute;right:171px;top:67.00px;font-size:12px;line-height:20px;color:#6d6d6d;white-space:nowrap;transform:scaleX(0.892);transform-origin:right center;">22,854525086</div>
<div style="position:absolute;right:51px;top:67.00px;font-size:12px;line-height:20px;color:#c42b1c;white-space:nowrap;transform:scaleX(0.89);transform-origin:right center;">35,234444600</div>
<div style="position:absolute;left:1544px;top:72px;width:24px;height:11px;background:#c018c0;border:2px solid #2020c0;box-sizing:border-box"></div>
<div style="position:absolute;left:0;top:106px;width:1591px;height:1px;background:#dcdcdc"></div>
<div style="position:absolute;right:1547.5px;top:87.00px;font-size:12px;line-height:20px;color:#000;white-space:nowrap;transform:scaleX(0.92);transform-origin:right center;">46</div>
<div style="position:absolute;left:143px;top:87.00px;font-size:12px;line-height:20px;color:#000;white-space:nowrap;transform:scaleX(0.94);transform-origin:left center;">guardian.exe (4892)</div>
<div style="position:absolute;right:1143px;top:87.00px;font-size:12px;line-height:20px;color:#e81123;white-space:nowrap;transform:scaleX(0.894);transform-origin:right center;">12,275781827</div>
<div style="position:absolute;left:453px;top:87.00px;font-size:12px;line-height:20px;color:#000;white-space:nowrap;transform:scaleX(0.98);transform-origin:left center;">&lt;None&gt;</div>
<div style="position:absolute;left:683px;top:0;width:614px;height:95px;overflow:hidden"><div style="position:absolute;left:2px;top:87.00px;font-size:12px;line-height:20px;color:#000;white-space:nowrap;transform:scaleX(0.962);transform-origin:left center;">C:\PROGRA~2\RESSOF~1\WORKSP~1\guardian.exe PowerMenuGuardian4200070 6 4560</div></div>
<div style="position:absolute;right:171px;top:87.00px;font-size:12px;line-height:20px;color:#6d6d6d;white-space:nowrap;transform:scaleX(0.892);transform-origin:right center;">22,858662763</div>
<div style="position:absolute;right:51px;top:87.00px;font-size:12px;line-height:20px;color:#c42b1c;white-space:nowrap;transform:scaleX(0.89);transform-origin:right center;">35,234444600</div>
<div style="position:absolute;left:1544px;top:92px;width:24px;height:11px;background:#2050e0;border:2px solid #20a0e0;box-sizing:border-box"></div>
</div>
<div style="position:absolute;left:588px;top:706px;width:5px;height:115px;background:#f8d000;"></div>
<div style="position:absolute;left:1560px;top:706px;width:5px;height:115px;background:#a8d4e6;"></div>
<div style="position:absolute;left:216px;top:133px;width:438px;height:240px;background:#f4f4f4;border:1px solid #a0a0a0;box-shadow:1px 1px 0 #909090, 2px 2px 3px rgba(0,0,0,0.45);box-sizing:border-box"></div>
<div style="position:absolute;left:247px;top:134px;width:1px;height:239px;background:#e2e2e2;"></div>
<div style="position:absolute;left:248px;top:134px;width:1px;height:239px;background:#ffffff;"></div>
<div style="position:absolute;left:220px;top:136px;width:430px;height:22px;background:#c4e0ef;border:1px solid #26a0da;"></div>
<div style="position:absolute;left:255.3px;top:138.00px;font-size:12px;line-height:20px;color:#000;white-space:nowrap;transform-origin:left center;transform:scaleX(0.9965);">Add graph to Analysis View</div>
<div style="position:absolute;left:255.3px;top:160.00px;font-size:12px;line-height:20px;color:#000;white-space:nowrap;transform-origin:left center;transform:scaleX(0.9968);">Add graph to New Analysis View</div>
<div style="position:absolute;left:255.3px;top:187.00px;font-size:12px;line-height:20px;color:#000;white-space:nowrap;transform-origin:left center;transform:scaleX(0.9898);">Add all System Activity graphs to Analysis View</div>
<div style="position:absolute;left:255.3px;top:208.00px;font-size:12px;line-height:20px;color:#000;white-space:nowrap;transform-origin:left center;transform:scaleX(0.9913);">Add all System Activity graphs to New Analysis View</div>
<div style="position:absolute;left:255.3px;top:236.00px;font-size:12px;line-height:20px;color:#8d8d8d;white-space:nowrap;transform-origin:left center;transform:scaleX(0.9809);">Zoom</div>
<div style="position:absolute;left:560.4px;top:236.00px;font-size:12px;line-height:20px;color:#8d8d8d;white-space:nowrap;transform-origin:left center;transform:scaleX(1.0236);">Ctrl+.</div>
<div style="position:absolute;left:255.3px;top:258.00px;font-size:12px;line-height:20px;color:#8d8d8d;white-space:nowrap;transform-origin:left center;transform:scaleX(1.0000);">Undo Zoom</div>
<div style="position:absolute;left:560.4px;top:258.00px;font-size:12px;line-height:20px;color:#8d8d8d;white-space:nowrap;transform-origin:left center;transform:scaleX(1.0242);">Ctrl+Z</div>
<div style="position:absolute;left:255.3px;top:280.00px;font-size:12px;line-height:20px;color:#8d8d8d;white-space:nowrap;transform-origin:left center;transform:scaleX(0.9696);">Redo Zoom</div>
<div style="position:absolute;left:560.4px;top:280.00px;font-size:12px;line-height:20px;color:#8d8d8d;white-space:nowrap;transform-origin:left center;transform:scaleX(1.0033);">Ctrl+Y</div>
<div style="position:absolute;left:255.3px;top:302.00px;font-size:12px;line-height:20px;color:#8d8d8d;white-space:nowrap;transform-origin:left center;transform:scaleX(0.9779);">Unzoom</div>
<div style="position:absolute;left:560.4px;top:302.00px;font-size:12px;line-height:20px;color:#8d8d8d;white-space:nowrap;transform-origin:left center;transform:scaleX(1.0430);">Ctrl+Shift+-</div>
<div style="position:absolute;left:255.3px;top:329.00px;font-size:12px;line-height:20px;color:#8d8d8d;white-space:nowrap;transform-origin:left center;transform:scaleX(1.0040);">Highlight Selection</div>
<div style="position:absolute;left:560.4px;top:329.00px;font-size:12px;line-height:20px;color:#8d8d8d;white-space:nowrap;transform-origin:left center;transform:scaleX(1.0372);">Ctrl+M</div>
<div style="position:absolute;left:255.3px;top:351.00px;font-size:12px;line-height:20px;color:#8d8d8d;white-space:nowrap;transform-origin:left center;transform:scaleX(0.9987);">Clear Highlight</div>
<div style="position:absolute;left:560.4px;top:351.00px;font-size:12px;line-height:20px;color:#8d8d8d;white-space:nowrap;transform-origin:left center;transform:scaleX(1.0392);">Ctrl+Shift+M</div>
<div style="position:absolute;left:250px;top:182px;width:400px;height:1px;background:#d7d7d7;"></div>
<div style="position:absolute;left:250px;top:231px;width:400px;height:1px;background:#d7d7d7;"></div>
<div style="position:absolute;left:250px;top:324px;width:400px;height:1px;background:#d7d7d7;"></div>
</div></body></html>
